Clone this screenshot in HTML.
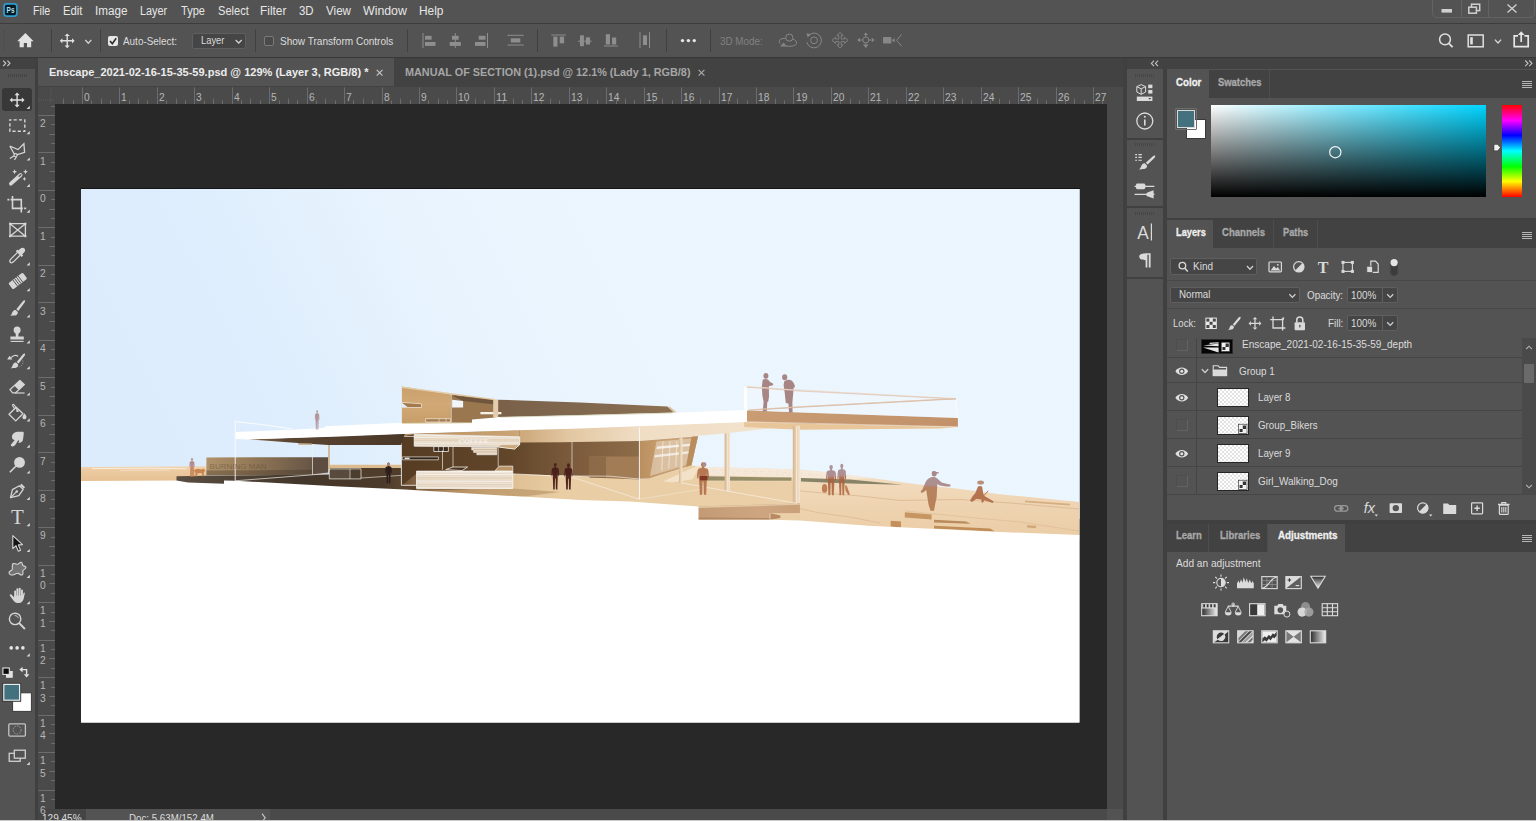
<!DOCTYPE html>
<html lang="en">
<head>
<meta charset="utf-8">
<title>Enscape_2021-02-16-15-35-59.psd @ 129% (Layer 3, RGB/8) *</title>
<style>
html,body{margin:0;padding:0;background:#535353;overflow:hidden;}
body{width:1536px;height:821px;font-family:"Liberation Sans",sans-serif;}
#app{position:relative;width:1536px;height:821px;overflow:hidden;background:#535353;}
#app div,#app span.t,#app svg{position:absolute;}
.t{white-space:nowrap;height:20px;line-height:20px;transform-origin:0 50%;}
#menubar{left:0;top:0;width:1536px;height:23px;background:#535353;}
#menusep{left:0;top:23px;width:1536px;height:1px;background:#3d3d3d;}
#optbar{left:0;top:24px;width:1536px;height:33px;background:#535353;}
#optsep{left:0;top:57px;width:1536px;height:1px;background:#383838;}
#winctl{left:1432px;top:-2px;width:103px;height:20px;border:1px solid #636363;border-radius:0 0 5px 5px;box-sizing:border-box;}
#winctl i{position:absolute;top:0;width:1px;height:18px;background:#636363;}
.vsep{width:1px;top:29px;height:23px;background:#404040;}
#toolbar{left:0;top:58px;width:35px;height:763px;background:#535353;}
#toolhead{left:0;top:58px;width:35px;height:11px;background:#424242;}
#toolsel{left:2px;top:88px;width:30px;height:23px;background:#383838;border-radius:3px;}
#gapL{left:35px;top:58px;width:3px;height:763px;background:#404040;}
#tabbar{left:38px;top:58px;width:1085px;height:29px;background:#424242;}
#tab1{left:38px;top:58px;width:356px;height:28px;background:#535353;}
#hruler{left:38px;top:87px;width:1085px;height:17px;background:#4a4a4a;}
#vruler{left:38px;top:104px;width:17px;height:705px;background:#4a4a4a;}
#rcorner{left:38px;top:87px;width:17px;height:17px;background:#4a4a4a;}
#vscroll{left:1107px;top:104px;width:16px;height:705px;background:#4a4a4a;}
#scorner{left:1107px;top:809px;width:16px;height:12px;background:#535353;}
#canvas{left:55px;top:104px;width:1052px;height:705px;background:#282828;overflow:hidden;}
#status{left:38px;top:809px;width:1069px;height:12px;background:#4a4a4a;}
#statzoom{left:38px;top:809px;width:48px;height:12px;background:#454545;}
#statdoc{left:86px;top:809px;width:184px;height:12px;background:#535353;}
#gapM{left:1123px;top:58px;width:4px;height:763px;background:#404040;}
#rhead{left:1127px;top:58px;width:409px;height:11px;background:#424242;}
#strip{left:1127px;top:69px;width:36px;height:752px;background:#535353;}
.ssep{left:1127px;width:36px;height:2px;background:#404040;}
#gapR{left:1163px;top:69px;width:4px;height:752px;background:#404040;}
.ptabs{left:1167px;width:369px;height:28px;background:#424242;}
.ptab{height:28px;background:#424242;border-right:1px solid #4d4d4d;box-sizing:border-box;}
.ptab.on{background:#535353;border-right:none;}
.pgap{left:1167px;width:369px;height:2px;background:#404040;}
.field{background:#454545;border:1px solid #5f5f5f;border-radius:2px;box-sizing:border-box;}
.hline{left:1167px;width:369px;height:1px;background:#484848;}
.row{left:1167px;width:355px;border-bottom:1px solid #454545;box-sizing:border-box;}
#eyecol{left:1196px;top:338px;width:1px;height:157px;background:#454545;}
#lscroll{left:1522px;top:338px;width:14px;height:157px;background:#4a4a4a;}
#lthumb{left:1524px;top:364px;width:10px;height:19px;background:#6a6a6a;border-radius:1px;}
.chk{background:conic-gradient(#e2e2e2 25%,#fff 0 50%,#e2e2e2 0 75%,#fff 0) 0 0/4px 4px;border:1px solid #262626;box-sizing:border-box;}
.eyebox{width:12px;height:12px;border:1px solid #4e4e4e;border-right-color:#626262;border-bottom-color:#626262;box-sizing:border-box;}
#edge{left:0;top:820px;width:1536px;height:1px;background:#c9c9c9;}
#labels{left:0;top:0;width:1536px;height:821px;overflow:hidden;}

</style>
</head>
<body>
<div id="app">
<div id="menubar"></div><div id="menusep"></div>
<div id="optbar"></div><div id="optsep"></div>
<div id="winctl"><i style="left:28px"></i><i style="left:55px"></i></div>
<div class="vsep" style="left:51px"></div>
<div class="vsep" style="left:100px"></div>
<div class="vsep" style="left:255px"></div>
<div class="vsep" style="left:407px"></div>
<div class="vsep" style="left:537px"></div>
<div class="vsep" style="left:666px"></div>
<div class="vsep" style="left:710px"></div>
<div class="field" style="left:192px;top:33px;width:54px;height:16px;background:#454545;border-color:#5f5f5f"></div>
<div style="left:108px;top:36px;width:10px;height:10px;background:#e6e6e6;border-radius:2px"></div>
<div style="left:264px;top:36px;width:10px;height:10px;border:1px solid #7a7a7a;border-radius:2px;box-sizing:border-box;background:#4a4a4a"></div>
<div id="toolbar"></div><div id="toolhead"></div><div id="toolsel"></div><div id="gapL"></div>
<div id="tabbar"></div><div id="tab1"></div>
<div id="hruler"></div><div id="vruler"></div><div id="rcorner"></div><div id="vscroll"></div>
<div id="status"></div><div id="scorner"></div><div id="statzoom"></div><div id="statdoc"></div>
<div id="gapM"></div><div id="rhead"></div><div id="strip"></div><div id="gapR"></div>
<div class="ssep" style="top:138px"></div><div class="ssep" style="top:206px"></div><div class="ssep" style="top:277px"></div>
<div class="ptabs" style="top:70px"></div>
<div class="ptab on" style="left:1167px;top:70px;width:42px"></div>
<div class="ptab" style="left:1209px;top:70px;width:61px"></div>
<div id="colorfield" style="left:1211px;top:105px;width:275px;height:92px;background:linear-gradient(to bottom,rgba(0,0,0,0),#000),linear-gradient(to right,#fff,#00d4ff)"></div>
<div id="huestrip" style="left:1502px;top:105px;width:20px;height:92px;background:linear-gradient(to bottom,#f00 0%,#f0f 17%,#00f 33%,#0ff 50%,#0f0 67%,#ff0 83%,#f00 100%)"></div>
<div style="left:1186px;top:119px;width:20px;height:20px;background:#fff;border:1px solid #3a3a3a;box-sizing:border-box"></div>
<div style="left:1175px;top:108px;width:22px;height:22px;border:1px solid #6e6e6e;box-sizing:border-box;border-radius:1px"></div>
<div style="left:1177px;top:110px;width:18px;height:18px;background:#44717e;border:1px solid #d8d8d8;box-sizing:border-box"></div>
<div class="pgap" style="top:218px"></div>
<div class="ptabs" style="top:220px"></div>
<div class="ptab on" style="left:1167px;top:220px;width:46px"></div>
<div class="ptab" style="left:1213px;top:220px;width:61px"></div>
<div class="ptab" style="left:1274px;top:220px;width:44px"></div>
<div class="field" style="left:1170px;top:258px;width:87px;height:17px"></div>
<div class="hline" style="top:280px"></div>
<div class="field" style="left:1170px;top:287px;width:130px;height:16px"></div>
<div class="field" style="left:1347px;top:287px;width:36px;height:16px;border-radius:2px 0 0 2px"></div>
<div class="field" style="left:1382px;top:287px;width:16px;height:16px;border-radius:0 2px 2px 0"></div>
<div class="hline" style="top:308px"></div>
<div class="field" style="left:1347px;top:315px;width:36px;height:16px;border-radius:2px 0 0 2px"></div>
<div class="field" style="left:1382px;top:315px;width:16px;height:16px;border-radius:0 2px 2px 0"></div>
<div class="row" style="top:338px;height:20px"></div>
<div class="row" style="top:358px;height:25px"></div>
<div class="row" style="top:383px;height:28px"></div>
<div class="row" style="top:411px;height:28px"></div>
<div class="row" style="top:439px;height:28px"></div>
<div class="row" style="top:467px;height:28px"></div>
<div id="eyecol"></div><div id="lscroll"></div><div id="lthumb"></div>
<div class="eyebox" style="left:1176px;top:339px"></div>
<div class="eyebox" style="left:1176px;top:419px"></div>
<div class="eyebox" style="left:1176px;top:475px"></div>
<div style="left:1201px;top:339px;width:32px;height:15px;background:#050505;border:1px solid #2a2a2a;box-sizing:border-box"></div>
<div class="chk" style="left:1217px;top:388px;width:32px;height:19px"></div>
<div class="chk" style="left:1217px;top:416px;width:32px;height:19px"></div>
<div class="chk" style="left:1217px;top:444px;width:32px;height:19px"></div>
<div class="chk" style="left:1217px;top:472px;width:32px;height:19px"></div>
<div class="pgap" style="top:520px;height:4px"></div>
<div class="ptabs" style="top:524px"></div>
<div class="ptab" style="left:1167px;top:524px;width:42px"></div>
<div class="ptab" style="left:1209px;top:524px;width:59px"></div>
<div class="ptab on" style="left:1268px;top:524px;width:77px"></div>
<div id="canvas">
<svg id="art" width="1052" height="705" viewBox="55 104 1052 705" style="left:0;top:0">
<defs>
<linearGradient id="sky" x1="81" y1="340" x2="1079" y2="-160" gradientUnits="userSpaceOnUse"><stop offset="0" stop-color="#dcecfd"/><stop offset="0.12" stop-color="#ddedfd"/><stop offset="0.21" stop-color="#e2f0fd"/><stop offset="0.3" stop-color="#e8f3fe"/><stop offset="0.4" stop-color="#eaf5fe"/><stop offset="1" stop-color="#ecf6fe"/></linearGradient>
<linearGradient id="skyv" x1="0" x2="0" y1="189" y2="500" gradientUnits="userSpaceOnUse"><stop offset="0" stop-color="#ffffff" stop-opacity="0.0"/><stop offset="1" stop-color="#ffffff" stop-opacity="0"/></linearGradient>
<linearGradient id="sandL" x1="0" x2="0" y1="466" y2="481" gradientUnits="userSpaceOnUse"><stop offset="0" stop-color="#f1d6b2"/><stop offset="0.35" stop-color="#ecc99f"/><stop offset="1" stop-color="#e6c195"/></linearGradient>
<linearGradient id="wallBM" x1="206" x2="328" y1="0" y2="0" gradientUnits="userSpaceOnUse"><stop offset="0" stop-color="#b0936a"/><stop offset="0.35" stop-color="#947a58"/><stop offset="0.8" stop-color="#6d5a48"/><stop offset="1" stop-color="#5c4c3f"/></linearGradient>
<linearGradient id="under" x1="248" x2="401" y1="0" y2="0" gradientUnits="userSpaceOnUse"><stop offset="0" stop-color="#8a6c48"/><stop offset="0.25" stop-color="#5a4532"/><stop offset="1" stop-color="#4a3828"/></linearGradient>
<linearGradient id="plat" x1="176" x2="420" y1="0" y2="0" gradientUnits="userSpaceOnUse"><stop offset="0" stop-color="#5a4d42"/><stop offset="0.5" stop-color="#43362b"/><stop offset="0.85" stop-color="#4c3a29"/><stop offset="1" stop-color="#6b5238"/></linearGradient>
<linearGradient id="intwall" x1="401" x2="640" y1="0" y2="0" gradientUnits="userSpaceOnUse"><stop offset="0" stop-color="#553c22"/><stop offset="0.45" stop-color="#62462a"/><stop offset="0.7" stop-color="#7a5a3b"/><stop offset="1" stop-color="#8d6c48"/></linearGradient>
<linearGradient id="floor" x1="401" x2="800" y1="0" y2="0" gradientUnits="userSpaceOnUse"><stop offset="0" stop-color="#6a5036"/><stop offset="0.09" stop-color="#a58258"/><stop offset="0.22" stop-color="#d9b98b"/><stop offset="0.4" stop-color="#e9cda4"/><stop offset="1" stop-color="#ebcfa8"/></linearGradient>
<linearGradient id="terr" x1="0" x2="0" y1="466" y2="535" gradientUnits="userSpaceOnUse"><stop offset="0" stop-color="#f3dfc4"/><stop offset="0.5" stop-color="#efd5b3"/><stop offset="1" stop-color="#ebcda6"/></linearGradient>
<linearGradient id="woodF" x1="0" x2="0" y1="386" y2="423" gradientUnits="userSpaceOnUse"><stop offset="0" stop-color="#c9a06c"/><stop offset="0.5" stop-color="#d2a976"/><stop offset="1" stop-color="#c79d68"/></linearGradient>
<linearGradient id="roofD" x1="497" x2="674" y1="0" y2="0" gradientUnits="userSpaceOnUse"><stop offset="0" stop-color="#7a6049"/><stop offset="0.5" stop-color="#80684f"/><stop offset="1" stop-color="#8d7051"/></linearGradient>
<linearGradient id="soffit" x1="401" x2="800" y1="0" y2="0" gradientUnits="userSpaceOnUse"><stop offset="0" stop-color="#b88f5e"/><stop offset="0.28" stop-color="#c9a374"/><stop offset="0.42" stop-color="#e2c7a2"/><stop offset="0.6" stop-color="#f0ddc4"/><stop offset="1" stop-color="#f3e4d0"/></linearGradient>
<linearGradient id="colg" x1="0" x2="1" y1="0" y2="0"><stop offset="0" stop-color="#d6b48e"/><stop offset="0.45" stop-color="#e6cdae"/><stop offset="1" stop-color="#f4e6d2"/></linearGradient>
<linearGradient id="sign" x1="0" x2="0" y1="0" y2="1"><stop offset="0" stop-color="#efe4d6"/><stop offset="0.2" stop-color="#f6f0e8"/><stop offset="0.4" stop-color="#e6d5bf"/><stop offset="0.6" stop-color="#f5efe7"/><stop offset="0.8" stop-color="#e9dccb"/><stop offset="1" stop-color="#f3ece3"/></linearGradient>
<linearGradient id="angwall" x1="639" x2="698" y1="0" y2="0" gradientUnits="userSpaceOnUse"><stop offset="0" stop-color="#b98f60"/><stop offset="0.35" stop-color="#c79d6d"/><stop offset="1" stop-color="#c9a274"/></linearGradient>
<linearGradient id="found" x1="698" x2="800" y1="0" y2="0" gradientUnits="userSpaceOnUse"><stop offset="0" stop-color="#c39a74"/><stop offset="0.6" stop-color="#cda681"/><stop offset="1" stop-color="#c8a07a"/></linearGradient>
<linearGradient id="deck" x1="746" x2="958" y1="0" y2="0" gradientUnits="userSpaceOnUse"><stop offset="0" stop-color="#c99c74"/><stop offset="0.5" stop-color="#c5976e"/><stop offset="1" stop-color="#c29169"/></linearGradient>
<linearGradient id="pgA" x1="0" x2="0" y1="0" y2="100" gradientUnits="userSpaceOnUse"><stop offset="0" stop-color="#a68890"/><stop offset="0.36" stop-color="#a68488"/><stop offset="0.46" stop-color="#a8603e"/><stop offset="1" stop-color="#b06c44"/></linearGradient>
<linearGradient id="pgB" x1="0" x2="0" y1="476" y2="511" gradientUnits="userSpaceOnUse"><stop offset="0" stop-color="#a98888"/><stop offset="0.24" stop-color="#a98686"/><stop offset="0.34" stop-color="#b07a58"/><stop offset="1" stop-color="#b47a50"/></linearGradient>
<clipPath id="imgclip"><rect x="81" y="189" width="998.5" height="533.5"/></clipPath>
</defs>
<rect x="80.5" y="188" width="999.5" height="1.2" fill="#151515"/>
<g clip-path="url(#imgclip)">
<rect x="81" y="189" width="999" height="534" fill="#ffffff"/>
<rect x="81" y="189" width="999" height="330" fill="url(#sky)"/>
<rect x="81" y="189" width="999" height="330" fill="url(#skyv)"/>
<path d="M81 466.9 L206.4 466.2 L206.4 481 L81 481 Z" fill="url(#sandL)"/>
<path d="M92 468.6 L150 468.2 L186 468.8" fill="none" stroke="#fbf3e8" stroke-width="1" stroke-opacity="0.8"/>
<path d="M120 470.4 L170 470.2" fill="none" stroke="#f8ecdc" stroke-width="0.8" stroke-opacity="0.7"/>
<path d="M686 466.2 L708 466.9 L800 469.6 L830 472.8 L873 478.2 L921 484.7 L956 488.4 L1000 494.3 L1079.5 502 L1079.5 540 L686 540 Z" fill="url(#terr)"/>
<path d="M704 466.8 L760 468.4 L800 469.6 L830 472.8 L873 478.2 L830 479.4 L800 477.6 L760 476.2 L708 475.2 Z" fill="#f5e9da" fill-opacity="0.95"/>
<path d="M712 470 L790 472.4 L828 475.6" fill="none" stroke="#dcc2a2" stroke-width="0.7" stroke-opacity="0.35" stroke-dasharray="3 2 1 2"/>
<path d="M716 472.8 L796 475 L850 478.6" fill="none" stroke="#d8bb98" stroke-width="0.6" stroke-opacity="0.3" stroke-dasharray="2 3 4 2"/>
<path d="M691.8 476 L791.5 477.6 L791.5 480.8 L691.8 480.4 Z" fill="#8a845e" fill-opacity="0.9"/>
<path d="M801 477.9 L850 479.4 L902.8 484.7 L850 483.4 L801 481.6 Z" fill="#767258" fill-opacity="0.85"/>
<path d="M800 491 L860 496 L900 500.5 L960 499.5 L1010 503 L1079 509" fill="none" stroke="#caa57a" stroke-width="0.6" stroke-opacity="0.8"/>
<path d="M700 497 L760 500 L820 513 L850 517 L880 523" fill="none" stroke="#caa57a" stroke-width="0.6" stroke-opacity="0.7"/>
<path d="M905 511 L960 516.5 L1020 522 L1079 531" fill="none" stroke="#d2b088" stroke-width="0.6" stroke-opacity="0.7"/>
<path d="M904.8 512.3 L931.6 514.5 L931.6 519.6 L904.8 517.6 Z" fill="#c79562"/>
<path d="M890.7 520.8 L901 521.6 L901 527.4 L890.7 526.6 Z" fill="#c38f5a"/>
<path d="M934 519.8 L966 521.6 L970.6 523.8 L934 522.4 Z" fill="#b98a5c"/>
<path d="M934 525.7 L990 528.6 L995 531.6 L934 528.4 Z" fill="#c08d58"/>
<path d="M1025 500.6 L1070 503.8 L1070 505.4 L1025 502.2 Z" fill="#d5ae82"/>
<path d="M1027 525.2 L1036 525.8 L1036 528.2 L1027 527.6 Z" fill="#d0a878"/>
<path d="M176.5 476.3 L206.4 475.7 L328 474.4 L401.2 471.6 L420 471.6 L420 492 L176.5 492 Z" fill="url(#plat)"/>
<path d="M206.4 457.4 L312.3 457.2 L312.3 474.8 L206.4 475.6 Z" fill="url(#wallBM)"/>
<path d="M312.3 457.2 L328.2 457.2 L328.2 473.2 L312.3 474.8 Z" fill="#5d4d40"/>
<path d="M206.4 470.5 L312.3 469.8 L312.3 474.8 L206.4 475.6 Z" fill="#3c3026" fill-opacity="0.35"/>
<path d="M329.5 464.8 L401.2 464.8 L401.2 467.9 L329.5 467.9 Z" fill="#dcbc8e"/>
<path d="M329.5 467.9 L401.2 467.9 L401.2 476.5 L329.5 479 Z" fill="#4f3c2a"/>
<path d="M329.3 468.9 L361 468.9 L361 478.9 L329.3 478.9 Z" fill="#4b3d30"/>
<path d="M329.3 468.9 L350 468.9 L350 478.9 L329.3 478.9 Z" fill="#584a3c"/>
<path d="M328.2 444.9 L329.8 444.9 L329.8 471 L328.2 471 Z" fill="#cfae84"/>
<path d="M401.2 433.9 L520 430 L640 427.4 L640 480 L401.2 487 Z" fill="url(#intwall)"/>
<path d="M416 474 L513 474 L580 476 L639 479.2 L648.8 478.4 L691.5 465.4 L700 466.5 L700 481 L800 481.6 L800 522 L401 522 L401.2 486 Z" fill="url(#floor)"/>
<path d="M401.2 485.3 L416.5 485.3 L416.5 488.4 L470 489 L401.2 492 Z" fill="#5a442e"/>
<path d="M416.5 488.4 L512.8 488.4 L560 492 L520 497 L416 490.5 Z" fill="#b08a5c" fill-opacity="0.55"/>
<path d="M589.6 456.5 L639.4 456.5 L639.4 479.5 L589.6 477.4 Z" fill="#a27c55"/>
<path d="M589.6 456.5 L606 456.5 L606 478 L589.6 477.4 Z" fill="#8e6b48"/>
<path d="M519.7 430 L744.2 422 L800 423.2 L800 426 L792.4 425.8 L724.4 433.4 L698 435.8 L639.4 441 L560 442.2 L519.7 442.6 Z" fill="url(#soffit)"/>
<path d="M401.2 433.9 L519.7 430 L519.7 436.8 L414.2 434.2 L401.2 436.4 Z" fill="url(#soffit)"/>
<path d="M639.4 441 L698 436.2 L691.5 465.2 L648.8 478.4 L639.4 478.8 Z" fill="url(#angwall)"/>
<path d="M656.5 441.5 L696.5 438 L692 463.4 L650 476 Z" fill="#e9dccb" fill-opacity="0.55"/>
<path d="M657 446.5 L696 443.2 L695.6 445.4 L656.4 449 Z" fill="#f7f3ee" fill-opacity="0.9"/>
<path d="M655 455 L694.2 450.6 L693.8 453 L654.2 457.6 Z" fill="#f7f3ee" fill-opacity="0.8"/>
<path d="M691.5 436.8 L698 436.2 L691.5 465.2 L686 466.8 Z" fill="#b98d5c"/>
<path d="M663 441 L661.8 470.36" fill="none" stroke="#fbf7f2" stroke-width="0.7" stroke-opacity="0.8"/>
<path d="M670 441 L668.8 468.4" fill="none" stroke="#fbf7f2" stroke-width="0.7" stroke-opacity="0.8"/>
<path d="M677 441 L675.8 466.44" fill="none" stroke="#fbf7f2" stroke-width="0.7" stroke-opacity="0.8"/>
<path d="M663.2 481.3 L697.7 465.6 L700 466.4 L692.5 479.3 L672 482.4 Z" fill="#f4e4cb" fill-opacity="0.9"/>
<path d="M414.2 434.2 L519.7 436.8 L519.7 444.6 L514.6 449 L497 446.8 L414.2 446.2 Z" fill="url(#sign)" stroke="#ffffff" stroke-width="0.7"/>
<path d="M497 446.8 L514.6 449 L519.7 444.6 L502 444.4 Z" fill="#c9a77c" stroke="#ffffff" stroke-width="0.5"/>
<path d="M415 436.4 L519 438" fill="none" stroke="#d6bf9f" stroke-width="0.45" stroke-opacity="0.8"/>
<path d="M415 438.4 L519 440" fill="none" stroke="#d6bf9f" stroke-width="0.45" stroke-opacity="0.8"/>
<path d="M415 440.4 L519 442" fill="none" stroke="#d6bf9f" stroke-width="0.45" stroke-opacity="0.8"/>
<path d="M415 442.4 L519 444" fill="none" stroke="#d6bf9f" stroke-width="0.45" stroke-opacity="0.8"/>
<path d="M415 444.4 L519 446" fill="none" stroke="#d6bf9f" stroke-width="0.45" stroke-opacity="0.8"/>
<path d="M471.7 447.4 L496.8 447.4 L496.8 454.8 L476.8 454.8 L476.8 452.4 L473.6 452.4 L473.6 450 L471.7 450 Z" fill="#e9dccb" stroke="#ffffff" stroke-width="0.5"/>
<path d="M473 449.6 L496.8 449.6" fill="none" stroke="#b99a74" stroke-width="0.5"/><path d="M475 452 L496.8 452" fill="none" stroke="#b99a74" stroke-width="0.5"/>
<path d="M433.8 446.6 L448.4 446.6 L448.4 451.5 L433.8 451.5 Z" fill="#3d2c1c" stroke="#ffffff" stroke-width="0.7"/>
<path d="M438.6 446.6 L438.6 451.5" fill="none" stroke="#fff" stroke-width="0.6"/><path d="M443.4 446.6 L443.4 451.5" fill="none" stroke="#fff" stroke-width="0.6"/>
<path d="M402.3 456.9 L438.4 456.9 L438.4 459.8 L402.3 459.8 Z" fill="#35261a" stroke="#ffffff" stroke-width="0.6"/>
<path d="M404.6 457.6 L409.6 457.6 L409.6 459.2 L404.6 459.2 Z" fill="#e8e0d6"/>
<path d="M416.5 471.1 L512.8 471.1 L512.8 488.4 L416.5 488.4 Z" fill="url(#sign)" stroke="#ffffff" stroke-width="0.7"/>
<path d="M417 473.2 L512.4 473.7" fill="none" stroke="#d4bd9d" stroke-width="0.45" stroke-opacity="0.85"/>
<path d="M417 475.4 L512.4 475.9" fill="none" stroke="#d4bd9d" stroke-width="0.45" stroke-opacity="0.85"/>
<path d="M417 477.6 L512.4 478.1" fill="none" stroke="#d4bd9d" stroke-width="0.45" stroke-opacity="0.85"/>
<path d="M417 479.8 L512.4 480.3" fill="none" stroke="#d4bd9d" stroke-width="0.45" stroke-opacity="0.85"/>
<path d="M417 482 L512.4 482.5" fill="none" stroke="#d4bd9d" stroke-width="0.45" stroke-opacity="0.85"/>
<path d="M417 484.2 L512.4 484.7" fill="none" stroke="#d4bd9d" stroke-width="0.45" stroke-opacity="0.85"/>
<path d="M417 486.4 L512.4 486.9" fill="none" stroke="#d4bd9d" stroke-width="0.45" stroke-opacity="0.85"/>
<path d="M495 470.8 L499.1 466.1 L512.8 466.1 L512.8 471 Z" fill="#b99569" stroke="#ffffff" stroke-width="0.6"/>
<path d="M445.7 469.6 L453 467 L467.6 467 L462.1 470.6 Z" fill="#4a3624" stroke="#f4efe8" stroke-width="0.8"/>
<path d="M401.4 436.4 L401.4 485.3 L416.5 485.3" fill="none" stroke="#fff" stroke-width="0.8"/>
<path d="M401.4 436.4 L414.2 436.4" fill="none" stroke="#fff" stroke-width="0.7"/>
<path d="M442.5 450.5 L442.5 469.7" fill="none" stroke="#fff" stroke-width="0.6"/><path d="M453 446.4 L453 467" fill="none" stroke="#fff" stroke-width="0.6"/><path d="M498.2 447.8 L498.2 466.3" fill="none" stroke="#fff" stroke-width="0.6"/>
<path d="M512.8 473.8 L551 475.8 L610 476.2 L639.4 479" fill="none" stroke="#fff" stroke-width="0.7" stroke-opacity="0.85"/>
<path d="M248.4 439.4 L405 433.6 L401.2 444.9 L328.1 444.9 L297.7 443.1 Z" fill="url(#under)"/>
<path d="M298.3 443.2 L311.9 443.2 L311.9 445 L298.3 445 Z" fill="#a58a68"/>
<path d="M497.3 399.7 L580 402.4 L667.4 406.5 L674 412.6 L580 415 L497.3 417 Z" fill="url(#roofD)"/>
<path d="M667.4 406.5 L670 406.7 L677 412.5 L674 412.6 Z" fill="#dcc3a0"/>
<path d="M235.5 432 L295.3 429.6 L324.6 427.9 L324.6 426.2 L402 422.8 L451 422.6 L472 422.4 L472 419.6 L497 417.2 L580 415.2 L674 412.8 L744.2 410 L746.8 410.4 L746.8 422 L580 428.4 L414.8 433.5 L340 436.4 L248.4 439.4 L235.5 439 Z" fill="#ffffff"/>
<path d="M402 423.4 L451 423 L472 422.6" fill="none" stroke="#cdbb7c" stroke-width="0.8" stroke-opacity="0.8"/>
<path d="M500 417.2 L580 415.4 L672 413" fill="none" stroke="#b8b07a" stroke-width="0.7" stroke-opacity="0.6"/>
<path d="M401.9 386.4 L451.2 394.6 L451.2 422.6 L401.9 423 Z" fill="url(#woodF)"/>
<path d="M451.2 394.6 L495 399.4 L495 417.4 L472 419.6 L472 422.4 L451.2 422.6 Z" fill="#9b7750"/>
<path d="M452 395.4 L495 400.2 L495 404.6 L463.1 401 Z" fill="#6f563c"/>
<path d="M401.9 386.4 L495 398.9 L495 400.2 L401.9 387.9 Z" fill="#e3cba6"/>
<path d="M452.1 399.7 L463.1 401 L463.1 407.4 L452.1 407.4 Z" fill="#f1f6fb"/>
<path d="M480.4 412 L501.4 412 L501.4 414.3 L480.4 414.3 Z" fill="#f6f1ea"/>
<path d="M401.5 402.4 L421.5 403.8 L421.5 407.5 L401.5 407.5 Z" fill="#a27a4c" stroke="#f3ece2" stroke-width="0.7"/>
<path d="M401.5 402.6 L407.6 406.9 L401.5 407.2 Z" fill="#e3effb"/>
<path d="M425.6 418.7 L450.7 418.7 L450.7 422 L425.6 422 Z" fill="#a57d50" stroke="#f3ece2" stroke-width="0.7"/>
<path d="M439 418.7 L439 422" fill="none" stroke="#f3ece2" stroke-width="0.6"/><path d="M446 418.7 L446 422" fill="none" stroke="#f3ece2" stroke-width="0.6"/>
<path d="M493.2 399.2 L498.2 399.8 L498.2 417.3 L493.2 417.6 Z" fill="#e4cdae"/>
<path d="M451.4 394.8 L451.4 422.4" fill="none" stroke="#f0e6d8" stroke-width="0.6" stroke-opacity="0.8"/>
<path d="M746.8 410.4 L800 412.4 L957.9 418 L957.9 427 L800 423.8 L746.8 422 Z" fill="url(#deck)"/>
<path d="M744.2 422 L800 423.8 L957.9 427 L940 428.4 L800 429.8 L744.2 427 Z" fill="#e8c69a"/>
<path d="M746.8 421.8 L957.9 426.8" fill="none" stroke="#f7efe4" stroke-width="0.7" stroke-opacity="0.8"/>
<path d="M745.9 386.3 L956 398.5 L957.5 418 L746.8 410.4 Z" fill="#f5faff" fill-opacity="0.35"/>
<path d="M745.9 386.3 L800 390.5 L956 398.5 L957.5 418" fill="none" stroke="#fdfdfd" stroke-width="0.8"/>
<path d="M744.2 386.6 L746.9 386.6 L746.9 422 L744.2 422 Z" fill="#ffffff"/>
<path d="M748.5 410 L800 406.8 L956 398.5" fill="none" stroke="#e6cdb0" stroke-width="0.8"/>
<path d="M745.9 386.8 L956 399" fill="none" stroke="#d9bfa4" stroke-width="0.5" stroke-opacity="0.7"/>
<path d="M679 437.8 L682.4 437.4 L682.4 483.2 L679 482.8 Z" fill="url(#colg)"/>
<path d="M724.6 433.4 L730 432.8 L730 491.7 L724.6 491.2 Z" fill="url(#colg)"/>
<path d="M792.8 425.8 L800 425.8 L800 503 L792.8 502.6 Z" fill="url(#colg)"/>
<path d="M727.3 433.2 L727.3 491.4" fill="none" stroke="#f8f0e4" stroke-width="0.7"/><path d="M796.4 425.8 L796.4 502.8" fill="none" stroke="#f8f0e4" stroke-width="0.8"/>
<path d="M698.4 506.6 L799.9 503.4 L799.9 513 L770 513.2 L770 519.7 L698.4 519.7 Z" fill="url(#found)"/>
<path d="M698.4 506.6 L799.9 503.4 L799.9 504.8 L698.4 508 Z" fill="#e3c8a6"/>
<path d="M698.4 517.6 L770 518 L770 519.7 L698.4 519.7 Z" fill="#a87f58" fill-opacity="0.7"/>
<path d="M770 513.2 L780.4 515.4 L780.4 518 L770 519.7 Z" fill="#b98a62"/>
<path d="M770 513.2 L770 519.7" fill="none" stroke="#f3e6d4" stroke-width="0.7"/>
<path d="M81 481 L176.5 480.6 L188 482.6 L224 483.8 L224 480.6 L235.5 480.8 L340 486.6 L405 489.6 L530 497.1 L580 500 L630 501.6 L698.4 506.6 L698.4 519.7 L770 519.7 L800 520.6 L868.2 525.7 L995 531.8 L1079.5 535 L1079.5 723 L81 723 Z" fill="#ffffff"/>
<path d="M235.2 480.8 L235.2 421.5 L262 424.6 L291.6 428.8" fill="none" stroke="#fdfdfd" stroke-width="0.9"/>
<path d="M235.2 480.8 L312.5 474.8 L328.1 473" fill="none" stroke="#f4f0ea" stroke-width="0.7"/>
<path d="M312.5 444.5 L312.5 474.8" fill="none" stroke="#f4f0ea" stroke-width="0.6"/><path d="M298 444.6 L312.5 444.8" fill="none" stroke="#f4f0ea" stroke-width="0.5"/>
<path d="M329.3 468.9 L361 468.9 L361 478.9 L329.3 478.9 L329.3 468.9" fill="none" stroke="#f4f0ea" stroke-width="0.7"/><path d="M350 468.9 L350 478.9" fill="none" stroke="#f4f0ea" stroke-width="0.6"/>
<path d="M361 478 L401.2 475.4" fill="none" stroke="#f4f0ea" stroke-width="0.6"/>
<path d="M639.4 427.5 L639.4 499.2" fill="none" stroke="#fdfdfd" stroke-width="0.9"/>
<path d="M572 442 L572 477.2 L639.4 499.2" fill="none" stroke="#f6f1ea" stroke-width="0.7" stroke-opacity="0.9"/>
<path d="M639.4 499.2 L700 489.5" fill="none" stroke="#f6f1ea" stroke-width="0.6" stroke-opacity="0.7"/>
<path d="M682 483 L729 491.4 L797 503.4" fill="none" stroke="#f8f4ee" stroke-width="0.7" stroke-opacity="0.9"/>
<text x="209.6" y="468.6" font-family="Liberation Sans, sans-serif" font-size="7.4" fill="#5f4d3a" fill-opacity="0.55" textLength="57" lengthAdjust="spacingAndGlyphs">BURNING MAN</text>
<text x="458.6" y="443.6" font-family="Liberation Sans, sans-serif" font-size="8" font-weight="700" fill="#ffffff" stroke="#e1d2bd" stroke-width="0.3" textLength="30.5" lengthAdjust="spacingAndGlyphs">COFFEE</text>
<g transform="translate(317.1 410.2) scale(0.1278 0.1940)" fill="#b08f92" fill-opacity="0.95"><ellipse cx="0" cy="7" rx="6.3" ry="7.3"/><path d="M-3 13.5 L3 13.5 L4 17 C10 17.5 15 19 16 24 L18 42 L17 50 L14 50 L12.5 40 L12 30 L11 46 L11.5 56 L10.5 75 L9.5 97 L10.5 100 L3 100 L2.5 97 L1.5 62 L0 56 L-1.5 62 L-2.5 97 L-3 100 L-10.5 100 L-9.5 97 L-10.5 75 L-11.5 56 L-11 46 L-12 30 L-12.5 40 L-14 50 L-17 50 L-18 42 L-16 24 C-15 19 -10 17.5 -4 17 Z"/></g>
<g transform="translate(192 458) scale(0.1444 0.1840)" fill="#b18686" fill-opacity="0.95"><ellipse cx="0" cy="7" rx="6.3" ry="7.3"/><path d="M-3 13.5 L3 13.5 L4 17 C10 17.5 15 19 16 24 L18 42 L17 50 L14 50 L12.5 40 L12 30 L11 46 L11.5 56 L10.5 75 L9.5 97 L10.5 100 L3 100 L2.5 97 L1.5 62 L0 56 L-1.5 62 L-2.5 97 L-3 100 L-10.5 100 L-9.5 97 L-10.5 75 L-11.5 56 L-11 46 L-12 30 L-12.5 40 L-14 50 L-17 50 L-18 42 L-16 24 C-15 19 -10 17.5 -4 17 Z"/></g>
<path d="M190.4 467.4 L194 467.4 L194.4 476.4 L190 476.4 Z" fill="#c98a58" fill-opacity="0.8"/>
<path d="M193.6 470.2 L197.6 468.8 L201.6 469.6 L203.4 468.4 L205.4 470.6 L204 472 L203.6 476.2 L202.4 476.2 L201.8 473 L197.6 473.2 L196.8 476.4 L195.6 476.4 L195.4 472.6 Z" fill="#c9854f"/>
<g transform="translate(388.5 462.6) scale(0.1833 0.2100)" fill="#2b1d19" fill-opacity="1"><ellipse cx="0" cy="7" rx="6.3" ry="7.3"/><path d="M-3 13.5 L3 13.5 L4 17 C10 17.5 15 19 16 24 L18 42 L17 50 L14 50 L12.5 40 L12 30 L11 46 L11.5 56 L10.5 75 L9.5 97 L10.5 100 L3 100 L2.5 97 L1.5 62 L0 56 L-1.5 62 L-2.5 97 L-3 100 L-10.5 100 L-9.5 97 L-10.5 75 L-11.5 56 L-11 46 L-12 30 L-12.5 40 L-14 50 L-17 50 L-18 42 L-16 24 C-15 19 -10 17.5 -4 17 Z"/></g>
<ellipse cx="388.5" cy="464.2" rx="1.5" ry="1.7" fill="#b27d78"/>
<g transform="translate(555.3 463) scale(0.2167 0.2650)" fill="#4a1e18" fill-opacity="0.95"><ellipse cx="0" cy="7" rx="6.3" ry="7.3"/><path d="M-3 13.5 L3 13.5 L4 17 C10 17.5 15 19 16 24 L18 42 L17 50 L14 50 L12.5 40 L12 30 L11 46 L11.5 56 L10.5 75 L9.5 97 L10.5 100 L3 100 L2.5 97 L1.5 62 L0 56 L-1.5 62 L-2.5 97 L-3 100 L-10.5 100 L-9.5 97 L-10.5 75 L-11.5 56 L-11 46 L-12 30 L-12.5 40 L-14 50 L-17 50 L-18 42 L-16 24 C-15 19 -10 17.5 -4 17 Z"/></g>
<g transform="translate(568.4 463.4) scale(0.2333 0.2610)" fill="#4a1e18" fill-opacity="0.95"><ellipse cx="0" cy="7" rx="6.3" ry="7.3"/><path d="M-3 13.5 L3 13.5 L4 17 C10 17.5 15 19 16 24 L18 42 L17 50 L14 50 L12.5 40 L12 30 L11 46 L11.5 56 L10.5 75 L9.5 97 L10.5 100 L3 100 L2.5 97 L1.5 62 L0 56 L-1.5 62 L-2.5 97 L-3 100 L-10.5 100 L-9.5 97 L-10.5 75 L-11.5 56 L-11 46 L-12 30 L-12.5 40 L-14 50 L-17 50 L-18 42 L-16 24 C-15 19 -10 17.5 -4 17 Z"/></g>
<g transform="translate(703 462.4) scale(0.3333 0.3240)" fill="#b2704a" fill-opacity="0.93"><ellipse cx="0" cy="7" rx="6.3" ry="7.3"/><path d="M-3 13.5 L3 13.5 L4 17 C10 17.5 15 19 16 24 L18 42 L17 50 L14 50 L12.5 40 L12 30 L11 46 L11.5 56 L10.5 75 L9.5 97 L10.5 100 L3 100 L2.5 97 L1.5 62 L0 56 L-1.5 62 L-2.5 97 L-3 100 L-10.5 100 L-9.5 97 L-10.5 75 L-11.5 56 L-11 46 L-12 30 L-12.5 40 L-14 50 L-17 50 L-18 42 L-16 24 C-15 19 -10 17.5 -4 17 Z"/></g>
<ellipse cx="704.4" cy="464.6" rx="2" ry="2.3" fill="#b08c92"/>
<path d="M699.6 476 L707.6 476 L707.4 480.2 L699.8 480.2 Z" fill="#7a2c1c" fill-opacity="0.85"/>
<ellipse cx="765.9" cy="375.8" rx="2.5" ry="2.9" fill="#a88585"/>
<path d="M762.8 379.6 C764.5 378.7 767 378.7 768.2 379.8 L770 382 L773 383.4 L773.2 385.3 L769.6 386.1 L768.9 386.1 L769 396.6 L768.2 401.8 L767.3 402 L766.8 411.4 L762.7 411.4 L763.6 402 L762.3 395 L761.9 386 Z" fill="#a88585"/>
<ellipse cx="784.7" cy="377.3" rx="2.6" ry="3" fill="#a88585"/>
<path d="M784.2 381.5 C786 379.6 790 379.2 791.5 380.6 C793.4 382 794.6 384.6 795 387 L793.6 387.8 L793.4 391 L792.4 402.4 L792.6 412.4 L789 412.4 L788.4 403.6 L785.8 403 L784.6 392 L783.6 385 Z" fill="#a88585"/>
<path d="M746.9 386.6 L800 390.5 L956 398.5" fill="none" stroke="#ecdccf" stroke-width="1.2"/>
<path d="M746.9 387.2 L800 391.1 L956 399" fill="none" stroke="#d2b29e" stroke-width="0.5"/>
<path d="M748.5 410 L800 406.8 L956 398.5" fill="none" stroke="#e4cdbb" stroke-width="1"/>
<path d="M748.5 410.5 L800 407.3 L956 399" fill="none" stroke="#cfa98f" stroke-width="0.5"/>
<g transform="translate(831.1 465) scale(0.2833 0.3030)" fill="url(#pgA)" fill-opacity="0.9"><ellipse cx="0" cy="7" rx="6.3" ry="7.3"/><path d="M-3 13.5 L3 13.5 L4 17 C10 17.5 15 19 16 24 L18 42 L17 50 L14 50 L12.5 40 L12 30 L11 46 L11.5 56 L10.5 75 L9.5 97 L10.5 100 L3 100 L2.5 97 L1.5 62 L0 56 L-1.5 62 L-2.5 97 L-3 100 L-10.5 100 L-9.5 97 L-10.5 75 L-11.5 56 L-11 46 L-12 30 L-12.5 40 L-14 50 L-17 50 L-18 42 L-16 24 C-15 19 -10 17.5 -4 17 Z"/></g>
<g transform="translate(841.8 463.8) scale(0.2444 0.3150)" fill="url(#pgA)" fill-opacity="0.9"><ellipse cx="0" cy="7" rx="6.3" ry="7.3"/><path d="M-3 13.5 L3 13.5 L4 17 C10 17.5 15 19 16 24 L18 42 L17 50 L14 50 L12.5 40 L12 30 L11 46 L11.5 56 L10.5 75 L9.5 97 L10.5 100 L3 100 L2.5 97 L1.5 62 L0 56 L-1.5 62 L-2.5 97 L-3 100 L-10.5 100 L-9.5 97 L-10.5 75 L-11.5 56 L-11 46 L-12 30 L-12.5 40 L-14 50 L-17 50 L-18 42 L-16 24 C-15 19 -10 17.5 -4 17 Z"/></g>
<ellipse cx="824.6" cy="488.4" rx="2.7" ry="4.4" fill="#b4683f" fill-opacity="0.8"/>
<path d="M845 485.6 L846.6 485.4 L850 494.4 L848.2 495 L845.6 491 Z" fill="#b4683f" fill-opacity="0.8"/>
<ellipse cx="934.2" cy="473.8" rx="2.5" ry="2.7" fill="#a98888"/>
<path d="M932 471.6 L938.8 472.2 L938.6 473.4 L932 473.2 Z" fill="#a98888"/>
<path d="M930.6 477.4 C932.6 476.6 935.4 476.8 937 478.2 L941.6 482.4 L948.6 484.2 L950.6 484.6 L950.2 486.4 L946.4 486.4 L939.8 485.6 L937.4 484 L937 490 L936.6 497.8 L935.4 503 L934 510.8 L930.4 510.8 L930 509 L928.6 505 L927.4 497.6 L926.2 490 L923.8 492 L921.6 493 L920.6 491.6 L922.4 489.4 L925.4 482.6 C926.6 479.8 928.4 478.2 930.6 477.4 Z" fill="url(#pgB)" fill-opacity="0.92"/>
<ellipse cx="980.6" cy="482.5" rx="3.4" ry="2.1" fill="#b48470" fill-opacity="0.92"/>
<path d="M978 486.6 C979.4 485.6 981.4 485.8 982.2 487 L983.2 493.6 L984.4 496 L993.8 501.4 L992.8 503 L984.6 500.2 L982.6 502.8 L981.6 502.4 L981.4 499.6 L976.2 499 L972 502 L970 500.8 L972.4 496.4 L975.2 493.2 Z" fill="#b06a48" fill-opacity="0.92"/>
<path d="M983.4 496.2 L988.2 490.8" fill="none" stroke="#b06a48" stroke-width="0.9"/>
</g>
</svg>
</div>
<svg id="icons" width="1536" height="821" viewBox="0 0 1536 821" style="left:0;top:0">
<rect x="4.05" y="3.85" width="12.8" height="12.3" rx="2.6" fill="#041c27" stroke="#319ccb" stroke-width="1.7"/>
<text x="6.6" y="13.1" font-family="Liberation Sans, sans-serif" font-size="8.3" font-weight="700" fill="#b8e2f0" textLength="7.9" lengthAdjust="spacingAndGlyphs">Ps</text>
<rect x="1441.5" y="9" width="10.5" height="3.6" fill="#cfcfcf"/>
<rect x="1471.5" y="4.2" width="8.2" height="6.4" fill="none" stroke="#cfcfcf" stroke-width="1.5"/>
<rect x="1468.8" y="7.2" width="7.6" height="6" fill="#535353" stroke="#cfcfcf" stroke-width="1.5"/>
<path d="M1507.5 4.6 L1516.5 12.6 M1516.5 4.6 L1507.5 12.6" stroke="#cfcfcf" stroke-width="1.4" fill="none"/>
<path d="M4 31 V51" stroke="#464646" stroke-width="1" stroke-dasharray="1 1.5" fill="none"/>
<path d="M17.2 41.3 L25.4 33 L33.6 41.3 L31.2 41.3 L31.2 47.3 L27 47.3 L27 43 L23.8 43 L23.8 47.3 L19.6 47.3 L19.6 41.3 Z" fill="#e2e2e2"/>
<path d="M61.8 40.8 L72.6 40.8 M67.2 35.4 L67.2 46.2" stroke="#e0e0e0" stroke-width="1.4" fill="none"/><path d="M74.6 40.8 L72 43.4 L72 38.2 Z" fill="#e0e0e0"/><path d="M59.8 40.8 L62.4 38.2 L62.4 43.4 Z" fill="#e0e0e0"/><path d="M67.2 48.2 L64.6 45.6 L69.8 45.6 Z" fill="#e0e0e0"/><path d="M67.2 33.4 L69.8 36 L64.6 36 Z" fill="#e0e0e0"/>
<path d="M85.3 40 L88.3 43.2 L91.3 40" fill="none" stroke="#d0d0d0" stroke-width="1.3"/>
<path d="M110 41 L112.3 43.6 L116.2 38.2" stroke="#2b2b2b" stroke-width="1.6" fill="none"/>
<path d="M235.7 40 L238.7 43 L241.7 40" fill="none" stroke="#d0d0d0" stroke-width="1.3"/>
<path d="M423 33 V48" stroke="#8e8e8e" stroke-width="1"/>
<rect x="425" y="35.8" width="6.6" height="3.9" fill="#8e8e8e"/><rect x="425" y="42" width="10.5" height="3.9" fill="#8e8e8e"/>
<path d="M455.3 33 V48" stroke="#8e8e8e" stroke-width="1"/>
<rect x="452" y="35.8" width="6.7" height="3.9" fill="#8e8e8e"/><rect x="449.7" y="42" width="11.2" height="3.9" fill="#8e8e8e"/>
<path d="M487.5 33 V48" stroke="#8e8e8e" stroke-width="1"/>
<rect x="478.7" y="35.8" width="6.8" height="3.9" fill="#8e8e8e"/><rect x="475" y="42" width="10.5" height="3.9" fill="#8e8e8e"/>
<path d="M507.5 35.3 H523.8 M507.5 45 H523.8" stroke="#8e8e8e" stroke-width="1"/>
<rect x="510.8" y="38.3" width="9.5" height="4.2" fill="#8e8e8e"/>
<path d="M551.3 35 H565.8" stroke="#8e8e8e" stroke-width="1"/>
<rect x="553.3" y="36.6" width="4.2" height="10" fill="#8e8e8e"/><rect x="559.7" y="36.6" width="4.4" height="6.7" fill="#8e8e8e"/>
<path d="M578 41.2 H591.7" stroke="#8e8e8e" stroke-width="1"/>
<rect x="580" y="35.3" width="3.9" height="10.9" fill="#8e8e8e"/><rect x="585.8" y="37.3" width="4.2" height="7.2" fill="#8e8e8e"/>
<path d="M603.8 46 H618" stroke="#8e8e8e" stroke-width="1"/>
<rect x="605.8" y="34.2" width="4.2" height="10.3" fill="#8e8e8e"/><rect x="612" y="37.5" width="4.2" height="7" fill="#8e8e8e"/>
<path d="M640 32.2 V48 M649.5 32.2 V48" stroke="#8e8e8e" stroke-width="1"/>
<rect x="643" y="35.3" width="4" height="9.7" fill="#8e8e8e"/>
<circle cx="682.5" cy="40.6" r="1.7" fill="#e6e6e6"/>
<circle cx="688.4" cy="40.6" r="1.7" fill="#e6e6e6"/>
<circle cx="694.3" cy="40.6" r="1.7" fill="#e6e6e6"/>
<circle cx="789.3" cy="37.6" r="3.6" fill="none" stroke="#878787" stroke-width="1"/>
<path d="M785.5 38.5 C780 38 777.5 41 780.5 43.8 M786 46 C792 47 797.5 45.5 796.5 42 C796 40.5 794.5 39.6 793 39.2" fill="none" stroke="#878787" stroke-width="1"/>
<path d="M780.2 46.6 L786.8 46.6 L783.6 42.6 Z" fill="#878787"/>
<circle cx="814" cy="40.3" r="3.4" fill="none" stroke="#878787" stroke-width="1"/>
<path d="M808.6 35.4 A7.4 7.4 0 1 1 806.8 42" fill="none" stroke="#878787" stroke-width="1"/>
<path d="M806.6 33.2 L811 34.2 L807.6 37.6 Z" fill="#878787"/>
<path d="M840 32.4 L843 35.6 L841.2 35.6 L841.2 39 L844.6 39 L844.6 37.2 L848 40.3 L844.6 43.4 L844.6 41.6 L841.2 41.6 L841.2 45 L843 45 L840 48.2 L837 45 L838.8 45 L838.8 41.6 L835.4 41.6 L835.4 43.4 L832 40.3 L835.4 37.2 L835.4 39 L838.8 39 L838.8 35.6 L837 35.6 Z" fill="none" stroke="#878787" stroke-width="0.9"/>
<circle cx="865.8" cy="40" r="3" fill="none" stroke="#878787" stroke-width="1"/>
<path d="M865.8 32.4 L868 35 L863.6 35 Z M857.2 40 L860 37.8 L860 42.2 Z M874.6 40 L871.8 37.8 L871.8 42.2 Z M865.8 48 L868.6 44.6 L863 44.6 Z" fill="#878787"/>
<path d="M865.8 35 V37 M860 40 H862.8 M868.8 40 H871.8 M865.8 43 V44.6" stroke="#878787" stroke-width="1"/>
<rect x="883" y="37" width="8.4" height="6.6" rx="0.8" fill="#878787"/>
<path d="M891.8 40.3 L894.6 38 L894.6 42.6 Z" fill="#878787"/>
<path d="M901.6 34.4 L896.6 40.3 L901.6 46.2" fill="none" stroke="#878787" stroke-width="1"/>
<circle cx="1445" cy="39.4" r="5.4" fill="none" stroke="#e0e0e0" stroke-width="1.5"/>
<path d="M1448.8 43.4 L1452.6 47.2" stroke="#e0e0e0" stroke-width="1.8" fill="none"/>
<rect x="1468.2" y="35" width="15" height="11.8" fill="none" stroke="#e0e0e0" stroke-width="1.5"/>
<rect x="1470.2" y="37.2" width="2.6" height="7.2" fill="#e0e0e0"/>
<path d="M1494.9 39.6 L1498 43 L1501.1 39.6" fill="none" stroke="#d8d8d8" stroke-width="1.3"/>
<path d="M1518 35.8 H1514.2 V46.6 H1528.2 V35.8 H1524.4" fill="none" stroke="#e6e6e6" stroke-width="1.7"/>
<path d="M1521.2 42 V33" stroke="#e6e6e6" stroke-width="1.7" fill="none"/>
<path d="M1517.8 35 L1521.2 31.2 L1524.6 35 Z" fill="#e6e6e6"/>
<path d="M3.2 60.6 L5.8 63.3 L3.2 66 M7.4 60.6 L10 63.3 L7.4 66" fill="none" stroke="#c8c8c8" stroke-width="1.1"/>
<path d="M8 75.5 H27" stroke="#444444" stroke-width="3" stroke-dasharray="1 1" fill="none" shape-rendering="crispEdges"/>
<path d="M11.7 100 L22.5 100 M17.1 94.6 L17.1 105.4" stroke="#e2e2e2" stroke-width="1.4" fill="none"/><path d="M24.5 100 L21.9 102.6 L21.9 97.4 Z" fill="#e2e2e2"/><path d="M9.7 100 L12.3 97.4 L12.3 102.6 Z" fill="#e2e2e2"/><path d="M17.1 107.4 L14.5 104.8 L19.7 104.8 Z" fill="#e2e2e2"/><path d="M17.1 92.6 L19.7 95.2 L14.5 95.2 Z" fill="#e2e2e2"/>
<path d="M29.8 109 L26.6 109 L29.8 105.8 Z" fill="#d6d6d6"/>
<rect x="9.9" y="119.9" width="14.9" height="11.4" fill="none" stroke="#d6d6d6" stroke-width="1.4" stroke-dasharray="3.2 2.1" stroke-dashoffset="1.6"/>
<path d="M29.8 134.3 L26.6 134.3 L29.8 131.1 Z" fill="#d6d6d6"/>
<path d="M9.8 146 L18 149.6 L23.9 143.8 L24.6 152.4 L16.6 154.8 M14.4 154.2 L9.8 146" fill="none" stroke="#d6d6d6" stroke-width="1.3" stroke-linejoin="miter"/>
<circle cx="15.6" cy="155.2" r="1.6" fill="none" stroke="#d6d6d6" stroke-width="1.1"/>
<path d="M14.2 155.8 L9.8 158.4 M16.4 156.8 L14.4 159.8" fill="none" stroke="#d6d6d6" stroke-width="1.2"/>
<path d="M29.8 160.6 L26.6 160.6 L29.8 157.4 Z" fill="#d6d6d6"/>
<path d="M10.9 183.7 L20.6 175" stroke="#d6d6d6" stroke-width="3.7" stroke-linecap="round" fill="none"/>
<path d="M19.2 176.3 L20.9 174.8" stroke="#535353" stroke-width="1.3" stroke-linecap="round" fill="none"/>
<path d="M14.6 169.3 L15.3 171.1 L17.1 171.8 L15.3 172.5 L14.6 174.3 L13.9 172.5 L12.1 171.8 L13.9 171.1 Z" fill="#d6d6d6"/><path d="M25.5 169.3 L26.2 171.1 L28 171.8 L26.2 172.5 L25.5 174.3 L24.8 172.5 L23 171.8 L24.8 171.1 Z" fill="#d6d6d6"/><path d="M24.4 176.8 L24.988 178.312 L26.5 178.9 L24.988 179.488 L24.4 181 L23.812 179.488 L22.3 178.9 L23.812 178.312 Z" fill="#d6d6d6"/>
<path d="M29.8 186.9 L26.6 186.9 L29.8 183.7 Z" fill="#d6d6d6"/>
<path d="M7.4 199.6 H9.4 M10.6 199.6 H21.3 V212.4 M12.5 196 V208.4 H23 M24.2 208.4 H26.2" fill="none" stroke="#d6d6d6" stroke-width="1.6"/>
<path d="M29.8 212.8 L26.6 212.8 L29.8 209.6 Z" fill="#d6d6d6"/>
<path d="M10 223.7 H25.4 V236.2 H10 Z M10 223.7 L25.4 236.2 M25.4 223.7 L10 236.2" fill="none" stroke="#d6d6d6" stroke-width="1.3"/>
<rect x="9" y="222.7" width="2" height="2" fill="#d6d6d6"/>
<rect x="24.4" y="222.7" width="2" height="2" fill="#d6d6d6"/>
<rect x="9" y="235.2" width="2" height="2" fill="#d6d6d6"/>
<rect x="24.4" y="235.2" width="2" height="2" fill="#d6d6d6"/>
<path d="M17.3 252.6 L11 258.9 C9.6 260.4 9.6 261.6 10.3 262.3 C11 263 12.2 263 13.7 261.6 L20 255.3" fill="none" stroke="#d6d6d6" stroke-width="1.3"/>
<path d="M15.8 251.2 L17.4 249.6 L18.4 250.6 L20.2 248.8 C21.4 247.4 23.4 247.4 24.4 248.4 C25.4 249.4 25.4 251.2 24 252.6 L22.2 254.4 L23.2 255.4 L21.6 257 Z" fill="#d6d6d6"/>
<path d="M29.8 265.4 L26.6 265.4 L29.8 262.2 Z" fill="#d6d6d6"/>
<g transform="translate(17.8 281) rotate(-37)"><rect x="-9" y="-3.9" width="18" height="7.8" rx="1.4" fill="#d6d6d6"/><path d="M-3.3 -3.9 V3.9 M-1.1 -3.9 V3.9 M1.1 -3.9 V3.9 M3.3 -3.9 V3.9" stroke="#535353" stroke-width="0.9"/></g>
<path d="M29.8 291.3 L26.6 291.3 L29.8 288.1 Z" fill="#d6d6d6"/>
<path d="M24.8 300.3 C25.4 300.9 25 301.9 24.4 302.8 L18.3 311 L16.3 309.3 L23 301 C23.6 300.3 24.3 299.9 24.8 300.3 Z" fill="#d6d6d6"/>
<path d="M15.6 310 L17.6 311.8 C18.4 313.6 16.8 315.6 14.6 315.6 C13 315.6 11.4 315.6 10.2 315.9 C11.8 314.6 11.8 312.8 12.8 311.4 C13.6 310.2 14.8 309.7 15.6 310 Z" fill="#d6d6d6"/>
<path d="M29.8 317.6 L26.6 317.6 L29.8 314.4 Z" fill="#d6d6d6"/>
<circle cx="17.1" cy="329.9" r="3.5" fill="#d6d6d6"/>
<path d="M15.4 332 L15.9 336.4 H10.4 V339.6 H23.8 V336.4 H18.3 L18.8 332 Z" fill="#d6d6d6"/>
<path d="M10.6 341.4 H23.6" stroke="#d6d6d6" stroke-width="1.1"/>
<path d="M29.8 343.4 L26.6 343.4 L29.8 340.2 Z" fill="#d6d6d6"/>
<path d="M24.8 353.6 C25.4 354.2 25 355.2 24.4 356 L18.6 363.6 L16.7 362 L23 354.3 C23.6 353.6 24.3 353.2 24.8 353.6 Z" fill="#d6d6d6"/>
<path d="M16 362.6 L18 364.3 C18.7 366 17.2 368 15.2 368 C13.6 368 12 368 10.8 368.4 C12.4 367 12.4 365.3 13.3 364 C14.1 362.8 15.2 362.3 16 362.6 Z" fill="#d6d6d6"/>
<path d="M7.2 359.6 L12.4 359.6 L9.6 355.8 Z" fill="#d6d6d6"/>
<path d="M11.2 357.6 C13 355.2 16 354.6 18.2 356.4" fill="none" stroke="#d6d6d6" stroke-width="1.1"/>
<path d="M22.8 360.5 C23.6 363 22.2 366 19.6 367" fill="none" stroke="#9a9a9a" stroke-width="0.9" stroke-dasharray="1.2 1.2"/>
<path d="M29.8 369.3 L26.6 369.3 L29.8 366.1 Z" fill="#d6d6d6"/>
<path d="M9.9 389.7 L19.9 380.4 L24.4 384.6 L15.6 392.8 H12.6 Z" fill="none" stroke="#d6d6d6" stroke-width="1.2" stroke-linejoin="round"/>
<path d="M14.2 385.7 L19.9 380.4 L24.4 384.6 L18.8 389.9 Z" fill="#d6d6d6"/>
<path d="M15 393 H24.6" stroke="#d6d6d6" stroke-width="1.2"/>
<path d="M29.8 395.6 L26.6 395.6 L29.8 392.4 Z" fill="#d6d6d6"/>
<path d="M9 414.2 L16.2 407.2 L23 413.7 L15.7 420.9 Z" fill="none" stroke="#d6d6d6" stroke-width="1.3" stroke-linejoin="round"/>
<path d="M14.8 408.8 C13.4 407 12 405.2 12.8 404.6 C13.8 403.9 15.6 406.4 17.4 410.6" fill="none" stroke="#d6d6d6" stroke-width="1.2"/>
<circle cx="17.5" cy="410.9" r="1.2" fill="#d6d6d6"/>
<path d="M24.6 413.2 C26 415.4 26.6 416.4 26.4 417.4 C26.2 418.6 25.4 419.2 24.4 419.2 C23.2 419.2 22.4 418.4 22.4 417.2 C22.4 416.2 23.4 414.8 24.6 413.2 Z" fill="#d6d6d6"/>
<path d="M29.8 421.4 L26.6 421.4 L29.8 418.2 Z" fill="#d6d6d6"/>
<path d="M12 436.6 C12.4 433.4 15 431.8 18.4 431.8 L22.4 431.8 C23.4 431.8 23.9 432.4 23.8 433.6 L23 439.4 C22.7 441.4 21.4 442.6 19.6 442.8 L18.4 442.9 L19.3 440.8 L18.2 440.3 L15.6 444.6 C14.6 446.2 13 446.8 11.6 446.2 C10.4 445.7 10.6 444.6 11.6 443.8 L14.6 440.2 L13.8 439.8 C12.4 439.2 11.8 438.2 12 436.6 Z" fill="#d6d6d6"/>
<path d="M29.8 447.8 L26.6 447.8 L29.8 444.6 Z" fill="#d6d6d6"/>
<circle cx="19.5" cy="462.4" r="5.4" fill="#d6d6d6"/>
<path d="M15.8 466.2 L9.8 472.3" stroke="#d6d6d6" stroke-width="1.6" fill="none"/>
<path d="M29.8 473.6 L26.6 473.6 L29.8 470.4 Z" fill="#d6d6d6"/>
<path d="M19.4 485.8 L23.2 489.4 L18.8 495.6 L10.6 497.6 L12.4 489.6 Z" fill="none" stroke="#d6d6d6" stroke-width="1.3" stroke-linejoin="round"/>
<path d="M10.8 497.4 L16.4 491.8" stroke="#d6d6d6" stroke-width="1.1" fill="none"/>
<circle cx="16.8" cy="491.4" r="1.2" fill="#d6d6d6"/>
<path d="M20 485.2 L21.6 483.8 L25 487.2 L23.8 488.8 Z" fill="#d6d6d6"/>
<path d="M29.8 499.9 L26.6 499.9 L29.8 496.7 Z" fill="#d6d6d6"/>
<text x="17.4" y="524.2" font-family="Liberation Serif, serif" font-size="21" fill="#d6d6d6" text-anchor="middle">T</text>
<path d="M29.8 526.2 L26.6 526.2 L29.8 523 Z" fill="#d6d6d6"/>
<path d="M12.8 535.6 L12.8 548.6 L16 545.7 L18.4 551.2 L20.6 550.2 L18.3 544.9 L22.5 544.6 Z" fill="#141414" stroke="#d6d6d6" stroke-width="1.1" stroke-linejoin="round"/>
<path d="M29.8 552.1 L26.6 552.1 L29.8 548.9 Z" fill="#d6d6d6"/>
<path d="M13.4 563.6 C15.6 563.2 16.2 564.6 17.8 564.2 C19.4 563.8 19.6 562.2 21.2 562.4 C22.8 562.6 22.2 564.6 22.8 565.4 C23.6 566.4 25.8 565.8 26 567.4 C26.2 569 23.6 569.4 23 570.6 C22.4 571.8 23.8 573.8 22.4 574.8 C21 575.8 19.6 573.8 18.2 573.4 C16.4 572.9 15.4 574.4 13.6 574.8 C11.4 575.3 9.2 574.6 9 573 C8.8 571.2 11.4 570.8 12.2 569.4 C13 568 11.2 564 13.4 563.6 Z" fill="#737373" stroke="#d6d6d6" stroke-width="1.1"/>
<path d="M29.8 577.9 L26.6 577.9 L29.8 574.7 Z" fill="#d6d6d6"/>
<rect x="14.2" y="590.4" width="1.95" height="9" rx="0.95" fill="#d6d6d6"/>
<rect x="16.45" y="588.2" width="1.95" height="9" rx="0.95" fill="#d6d6d6"/>
<rect x="18.7" y="587.8" width="1.95" height="9" rx="0.95" fill="#d6d6d6"/>
<rect x="20.95" y="589.6" width="1.95" height="9" rx="0.95" fill="#d6d6d6"/>
<path d="M14.2 595.6 H22.9 L23.4 593.2 C23.8 592 25 592.4 24.8 593.6 L23.6 599 C23 601.4 21.4 602.9 19 602.9 L17.6 602.9 C15.6 602.9 14.4 601.9 13.2 600.3 L9.9 595.7 C9.3 594.7 10.5 593.7 11.5 594.5 L14.2 597.4 Z" fill="#d6d6d6"/>
<path d="M29.8 604.2 L26.6 604.2 L29.8 601 Z" fill="#d6d6d6"/>
<circle cx="15.1" cy="618.9" r="5.7" fill="none" stroke="#d6d6d6" stroke-width="1.4"/>
<path d="M19.2 623.2 L24.9 629" stroke="#d6d6d6" stroke-width="1.9" fill="none"/>
<path d="M14.6 615.6 C16.4 615.4 18 616.6 18.3 618.2" fill="none" stroke="#d6d6d6" stroke-width="0.9"/>
<circle cx="11.2" cy="647.9" r="1.8" fill="#e4e4e4"/>
<circle cx="17.1" cy="647.9" r="1.8" fill="#e4e4e4"/>
<circle cx="22.9" cy="647.9" r="1.8" fill="#e4e4e4"/>
<path d="M29.8 656.4 L26.6 656.4 L29.8 653.2 Z" fill="#d6d6d6"/>
<rect x="6" y="671" width="6.8" height="6.8" fill="#e2e2e2"/>
<rect x="2.9" y="668" width="6.4" height="6.4" fill="#0a0a0a" stroke="#e2e2e2" stroke-width="1.1"/>
<path d="M22 669.6 H26.6 V674.6" fill="none" stroke="#e2e2e2" stroke-width="1.4"/>
<path d="M19.4 669.6 L22.6 666.8 L22.6 672.4 Z M26.6 677.4 L23.8 674.2 L29.4 674.2 Z" fill="#e2e2e2"/>
<rect x="12.6" y="692.8" width="18.8" height="18.6" fill="#ffffff" stroke="#3a3a3a" stroke-width="1"/>
<rect x="2.2" y="682.8" width="19" height="19" fill="#3a3a3a"/>
<rect x="3.2" y="683.8" width="17" height="17" fill="#e6eef0"/>
<rect x="4.4" y="685" width="14.6" height="14.6" fill="#44717e"/>
<rect x="8.8" y="723.9" width="16.6" height="12.2" rx="1" fill="none" stroke="#c4c4c4" stroke-width="1.3"/>
<circle cx="17.1" cy="730" r="4" fill="none" stroke="#9a9a9a" stroke-width="1" stroke-dasharray="1.6 1"/>
<rect x="9.2" y="753.3" width="11" height="8" fill="none" stroke="#d0d0d0" stroke-width="1.3"/>
<rect x="14.3" y="750.2" width="11" height="8" fill="#535353" stroke="#d0d0d0" stroke-width="1.3"/>
<path d="M29.8 764.9 L26.6 764.9 L29.8 761.7 Z" fill="#d6d6d6"/>
<path d="M376.7 69.8 L382.5 75.6 M382.5 69.8 L376.7 75.6" stroke="#c4c4c4" stroke-width="1.2" fill="none"/>
<path d="M698.6 69.8 L704.4 75.6 M704.4 69.8 L698.6 75.6" stroke="#a8a8a8" stroke-width="1.2" fill="none"/>
<path d="M82.5 87.4V104M119.5 87.4V104M157.5 87.4V104M194.5 87.4V104M232.5 87.4V104M269.5 87.4V104M307.5 87.4V104M344.5 87.4V104M382.5 87.4V104M419.5 87.4V104M456.5 87.4V104M494.5 87.4V104M531.5 87.4V104M569.5 87.4V104M606.5 87.4V104M644.5 87.4V104M681.5 87.4V104M719.5 87.4V104M756.5 87.4V104M793.5 87.4V104M831.5 87.4V104M868.5 87.4V104M906.5 87.4V104M943.5 87.4V104M981.5 87.4V104M1018.5 87.4V104M1056.5 87.4V104M1093.5 87.4V104" stroke="#6c6c6c" stroke-width="1" fill="none"/>
<path d="M63.5 98.6V104M101.5 98.6V104M138.5 98.6V104M176.5 98.6V104M213.5 98.6V104M250.5 98.6V104M288.5 98.6V104M325.5 98.6V104M363.5 98.6V104M400.5 98.6V104M438.5 98.6V104M475.5 98.6V104M513.5 98.6V104M550.5 98.6V104M587.5 98.6V104M625.5 98.6V104M662.5 98.6V104M700.5 98.6V104M737.5 98.6V104M775.5 98.6V104M812.5 98.6V104M850.5 98.6V104M887.5 98.6V104M925.5 98.6V104M962.5 98.6V104M999.5 98.6V104M1037.5 98.6V104M1074.5 98.6V104M73.5 100.4V104M91.5 100.4V104M110.5 100.4V104M129.5 100.4V104M147.5 100.4V104M166.5 100.4V104M185.5 100.4V104M204.5 100.4V104M222.5 100.4V104M241.5 100.4V104M260.5 100.4V104M279.5 100.4V104M297.5 100.4V104M316.5 100.4V104M335.5 100.4V104M353.5 100.4V104M372.5 100.4V104M391.5 100.4V104M410.5 100.4V104M428.5 100.4V104M447.5 100.4V104M466.5 100.4V104M484.5 100.4V104M503.5 100.4V104M522.5 100.4V104M541.5 100.4V104M559.5 100.4V104M578.5 100.4V104M597.5 100.4V104M616.5 100.4V104M634.5 100.4V104M653.5 100.4V104M672.5 100.4V104M690.5 100.4V104M709.5 100.4V104M728.5 100.4V104M747.5 100.4V104M765.5 100.4V104M784.5 100.4V104M803.5 100.4V104M822.5 100.4V104M840.5 100.4V104M859.5 100.4V104M878.5 100.4V104M896.5 100.4V104M915.5 100.4V104M934.5 100.4V104M953.5 100.4V104M971.5 100.4V104M990.5 100.4V104M1009.5 100.4V104M1028.5 100.4V104M1046.5 100.4V104M1065.5 100.4V104M1084.5 100.4V104M1102.5 100.4V104" stroke="#6c6c6c" stroke-width="1" fill="none"/>
<path d="M38.5 115.5H55M38.5 152.5H55M38.5 190.5H55M38.5 227.5H55M38.5 265.5H55M38.5 302.5H55M38.5 340.5H55M38.5 377.5H55M38.5 415.5H55M38.5 452.5H55M38.5 490.5H55M38.5 527.5H55M38.5 565.5H55M38.5 602.5H55M38.5 640.5H55M38.5 677.5H55M38.5 715.5H55M38.5 752.5H55M38.5 790.5H55" stroke="#6c6c6c" stroke-width="1" fill="none"/>
<path d="M51.2 106.5H55M51.2 124.5H55M49.4 134.5H55M51.2 143.5H55M51.2 162.5H55M49.4 171.5H55M51.2 181.5H55M51.2 199.5H55M49.4 209.5H55M51.2 218.5H55M51.2 237.5H55M49.4 246.5H55M51.2 255.5H55M51.2 274.5H55M49.4 284.5H55M51.2 293.5H55M51.2 312.5H55M49.4 321.5H55M51.2 330.5H55M51.2 349.5H55M49.4 359.5H55M51.2 368.5H55M51.2 387.5H55M49.4 396.5H55M51.2 405.5H55M51.2 424.5H55M49.4 434.5H55M51.2 443.5H55M51.2 462.5H55M49.4 471.5H55M51.2 480.5H55M51.2 499.5H55M49.4 508.5H55M51.2 518.5H55M51.2 537.5H55M49.4 546.5H55M51.2 555.5H55M51.2 574.5H55M49.4 583.5H55M51.2 593.5H55M51.2 612.5H55M49.4 621.5H55M51.2 630.5H55M51.2 649.5H55M49.4 658.5H55M51.2 668.5H55M51.2 687.5H55M49.4 696.5H55M51.2 705.5H55M51.2 724.5H55M49.4 733.5H55M51.2 743.5H55M51.2 761.5H55M49.4 771.5H55M51.2 780.5H55M51.2 799.5H55" stroke="#6c6c6c" stroke-width="1" fill="none"/>
<path d="M50.8 87.5V103.5M39 100H54.5" stroke="#5c5c5c" stroke-width="1" stroke-dasharray="1 1" fill="none"/>
<path d="M262 813.6 L265.2 817.8 L262 822" stroke="#c8c8c8" stroke-width="1.1" fill="none"/>
<path d="M1154 60.7 L1151.4 63.4 L1154 66.1 M1158 60.7 L1155.4 63.4 L1158 66.1" fill="none" stroke="#c4c4c4" stroke-width="1.1"/>
<path d="M1525.2 60.5 L1528 63.3 L1525.2 66.1 M1529.2 60.5 L1532 63.3 L1529.2 66.1" fill="none" stroke="#c4c4c4" stroke-width="1.1"/>
<path d="M1135 75.5 H1155" stroke="#464646" stroke-width="3" stroke-dasharray="1 1" fill="none" shape-rendering="crispEdges"/>
<path d="M1135 144.5 H1155" stroke="#464646" stroke-width="3" stroke-dasharray="1 1" fill="none" shape-rendering="crispEdges"/>
<path d="M1135 213.5 H1155" stroke="#464646" stroke-width="3" stroke-dasharray="1 1" fill="none" shape-rendering="crispEdges"/>
<path d="M1141.2 84.6 L1145.6 86.6 L1145.6 92 L1141.2 94.4 L1136.8 92 L1136.8 86.6 Z M1136.8 86.6 L1141.2 88.8 L1145.6 86.6 M1141.2 88.8 V94.4" fill="none" stroke="#dadada" stroke-width="1"/>
<rect x="1148.2" y="84.6" width="4.2" height="3.6" fill="#dadada"/><rect x="1148.2" y="90" width="4.2" height="3.6" fill="#dadada"/>
<rect x="1136.8" y="96.6" width="15.6" height="4.4" fill="#dadada"/>
<path d="M1148.4 98 L1151.2 98 L1149.8 99.8 Z" fill="#444"/>
<circle cx="1144.8" cy="121" r="8" fill="none" stroke="#dadada" stroke-width="1.3"/>
<path d="M1144.8 119.6 V125.6" stroke="#dadada" stroke-width="1.6"/><circle cx="1144.8" cy="116.8" r="1" fill="#dadada"/>
<path d="M1135.2 154.6 H1137 M1138.4 154.6 H1141.8 M1135.2 157.4 H1137 M1138.4 157.4 H1141.8 M1135.2 160.2 H1137 M1138.4 160.2 H1141.8" stroke="#dadada" stroke-width="1.1"/>
<path d="M1155 155.6 C1155.6 156.2 1155.2 157 1154.6 157.8 L1147.6 164.6 L1145.8 162.8 L1153.2 156 C1153.8 155.4 1154.5 155.2 1155 155.6 Z" fill="#dadada"/>
<path d="M1145 163.4 L1147 165.4 C1147.4 167.2 1145.8 169 1143.6 169 C1142 169 1140.2 169.2 1138.8 169.8 C1140.6 168.4 1140.8 166.6 1141.8 165 C1142.6 163.8 1144 163.2 1145 163.4 Z" fill="#dadada"/>
<path d="M1134.6 186.4 H1154.4 M1134.6 194.4 H1154.4" stroke="#dadada" stroke-width="1.4"/>
<path d="M1137 183.6 L1144 183.6 C1146 183.6 1146 189.2 1144 189.2 L1137 189.2 C1135.4 189.2 1135.4 183.6 1137 183.6 Z" fill="#dadada"/>
<path d="M1153.6 190.2 L1153.6 198.6 L1148 196.6 C1145.6 195.8 1145.6 193 1148 192.2 Z" fill="#dadada"/>
<text x="1137.2" y="239" font-family="Liberation Sans, sans-serif" font-size="18" fill="#dadada" textLength="11.5" lengthAdjust="spacingAndGlyphs">A</text>
<path d="M1151.4 223.6 V240.6" stroke="#dadada" stroke-width="1.2"/>
<path d="M1146.2 253.2 H1150.6 V267.6 H1148.8 V254.8 H1147.4 V267.6 H1145.6 V260.2 C1141.6 260.2 1139.2 259 1139.2 256.6 C1139.2 254.4 1141.8 253.2 1146.2 253.2 Z" fill="#dadada"/>
<path d="M1522 81.5 h10 M1522 83.5 h10 M1522 85.5 h10 M1522 87.5 h10" stroke="#b6b6b6" stroke-width="1" fill="none" shape-rendering="crispEdges"/>
<path d="M1522 232.5 h10 M1522 234.5 h10 M1522 236.5 h10 M1522 238.5 h10" stroke="#b6b6b6" stroke-width="1" fill="none" shape-rendering="crispEdges"/>
<path d="M1522 535.5 h10 M1522 537.5 h10 M1522 539.5 h10 M1522 541.5 h10" stroke="#b6b6b6" stroke-width="1" fill="none" shape-rendering="crispEdges"/>
<circle cx="1335.3" cy="152.2" r="5.6" fill="none" stroke="#f4f4f4" stroke-width="1.2"/>
<path d="M1494 144.4 L1497.6 144.4 L1500.4 147.6 L1497.6 150.8 L1494 150.8 Z" fill="#f0f0f0" stroke="#333" stroke-width="0.5"/>
<circle cx="1182.4" cy="265.6" r="3.3" fill="none" stroke="#dadada" stroke-width="1.3"/><path d="M1184.8 268.2 L1187.8 271.4" stroke="#dadada" stroke-width="1.5"/>
<path d="M1247 266 L1250 269.2 L1253 266" fill="none" stroke="#d0d0d0" stroke-width="1.3"/>
<rect x="1269" y="262" width="12.4" height="9.8" rx="0.8" fill="none" stroke="#dadada" stroke-width="1.2"/>
<path d="M1270.6 270.4 L1274 266 L1276.2 268.4 L1277.8 267 L1280.2 270.4 Z" fill="#dadada"/><circle cx="1277.8" cy="264.8" r="0.9" fill="#dadada"/>
<circle cx="1298.8" cy="266.8" r="5.2" fill="none" stroke="#dadada" stroke-width="1.2"/>
<path d="M1302.5 263.1 A5.2 5.2 0 0 1 1295.1 270.5 Z" fill="#dadada"/>
<text x="1323" y="273" font-family="Liberation Serif, serif" font-size="16" font-weight="700" fill="#dadada" text-anchor="middle">T</text>
<rect x="1343" y="262.4" width="9.4" height="9" fill="none" stroke="#dadada" stroke-width="1.1"/>
<rect x="1341.5" y="260.9" width="3" height="3" fill="#dadada"/>
<rect x="1350.9" y="260.9" width="3" height="3" fill="#dadada"/>
<rect x="1341.5" y="269.9" width="3" height="3" fill="#dadada"/>
<rect x="1350.9" y="269.9" width="3" height="3" fill="#dadada"/>
<path d="M1370.8 261.2 H1375.4 L1378.2 264 V272.4 H1370.8 Z" fill="none" stroke="#dadada" stroke-width="1.2"/>
<rect x="1366.8" y="266.2" width="5.8" height="6.2" fill="#dadada" stroke="#535353" stroke-width="0.8"/>
<rect x="1390.4" y="259.4" width="7.4" height="16.4" rx="3.7" fill="#3c3c3c" stroke="#484848" stroke-width="0.8"/>
<circle cx="1394.1" cy="262.6" r="3.6" fill="#e4e4e4"/>
<path d="M1289.4 294.2 L1292.4 297.4 L1295.4 294.2" fill="none" stroke="#d0d0d0" stroke-width="1.3"/>
<path d="M1387.2 294.2 L1390.2 297.4 L1393.2 294.2" fill="none" stroke="#d0d0d0" stroke-width="1.3"/>
<path d="M1387.2 322.2 L1390.2 325.4 L1393.2 322.2" fill="none" stroke="#d0d0d0" stroke-width="1.3"/>
<rect x="1205.4" y="317.6" width="11.4" height="11.4" fill="#e8e8e8"/>
<rect x="1206.4" y="318.6" width="3" height="3" fill="#484848"/>
<rect x="1206.4" y="325" width="3" height="3" fill="#484848"/>
<rect x="1209.6" y="321.8" width="3" height="3" fill="#484848"/>
<rect x="1212.8" y="318.6" width="3" height="3" fill="#484848"/>
<rect x="1212.8" y="325" width="3" height="3" fill="#484848"/>
<path d="M1240.4 317 C1241 317.6 1240.6 318.4 1240 319.2 L1234.4 326 L1232.8 324.6 L1238.6 317.6 C1239.2 317 1239.9 316.6 1240.4 317 Z" fill="#dadada"/>
<path d="M1232.2 325.2 L1233.8 326.6 C1234.2 328.2 1233 329.6 1231.4 329.6 C1230.2 329.6 1229.2 329.8 1228.2 330.2 C1229.4 329 1229.4 327.6 1230 326.4 C1230.6 325.4 1231.6 325 1232.2 325.2 Z" fill="#dadada"/>
<path d="M1250.6 323.4 L1259.4 323.4 M1255 319 L1255 327.8" stroke="#dadada" stroke-width="1.2" fill="none"/><path d="M1261.4 323.4 L1259.1 325.7 L1259.1 321.1 Z" fill="#dadada"/><path d="M1248.6 323.4 L1250.9 321.1 L1250.9 325.7 Z" fill="#dadada"/><path d="M1255 329.8 L1252.7 327.5 L1257.3 327.5 Z" fill="#dadada"/><path d="M1255 317 L1257.3 319.3 L1252.7 319.3 Z" fill="#dadada"/>
<path d="M1273 316.6 V328 H1285.4 M1270.2 319.6 H1282.6 V330.6" fill="none" stroke="#dadada" stroke-width="1.3"/>
<path d="M1281.4 318 L1284.4 317.2 L1283.6 320.2 Z" fill="#dadada"/>
<rect x="1294.6" y="322.2" width="10.4" height="8" rx="1" fill="#dadada"/>
<path d="M1296.8 322.4 V320 A3 3 0 0 1 1302.8 320 V322.4" fill="none" stroke="#dadada" stroke-width="1.5"/>
<rect x="1299.2" y="324.8" width="1.3" height="2.6" fill="#535353"/>
<path d="M1175.4 371.2 C1178.4 366.2 1185.2 366.2 1188.2 371.2 C1185.2 376.2 1178.4 376.2 1175.4 371.2 Z" fill="#e0e0e0"/><circle cx="1181.8" cy="371.2" r="2.7" fill="#535353"/><circle cx="1181.8" cy="371.2" r="1.5" fill="#e0e0e0"/>
<path d="M1175.4 397.7 C1178.4 392.7 1185.2 392.7 1188.2 397.7 C1185.2 402.7 1178.4 402.7 1175.4 397.7 Z" fill="#e0e0e0"/><circle cx="1181.8" cy="397.7" r="2.7" fill="#535353"/><circle cx="1181.8" cy="397.7" r="1.5" fill="#e0e0e0"/>
<path d="M1175.4 453.8 C1178.4 448.8 1185.2 448.8 1188.2 453.8 C1185.2 458.8 1178.4 458.8 1175.4 453.8 Z" fill="#e0e0e0"/><circle cx="1181.8" cy="453.8" r="2.7" fill="#535353"/><circle cx="1181.8" cy="453.8" r="1.5" fill="#e0e0e0"/>
<path d="M1203 345.4 L1218.6 343.6 L1218.6 346.2 Z M1203 347.4 L1218.6 347.6 L1218.6 352.6 Z M1209.6 342.8 L1218.6 342.2 L1218.6 343.2 L1209.6 344 Z" fill="#e8e8e8"/>
<rect x="1221.2" y="342.2" width="8.6" height="9.4" fill="#f2f2f2" stroke="#222" stroke-width="0.6"/><path d="M1222.4 347 h3 v3 h-3 Z M1225.6 343.6 h3.2 v3.4 h-3.2 Z" fill="#333"/>
<path d="M1201.8 369.1 L1205 372.5 L1208.2 369.1" fill="none" stroke="#d0d0d0" stroke-width="1.3"/>
<path d="M1213.2 365.8 H1218.2 L1219.6 367.4 H1226.6 V370 H1213.2 Z" fill="none" stroke="#dadada" stroke-width="1.1"/>
<rect x="1212.6" y="370" width="14.6" height="6.2" fill="#dadada"/>
<rect x="1238.4" y="424.2" width="8.6" height="9.4" fill="#f2f2f2" stroke="#222" stroke-width="0.6"/><path d="M1239.6 429 h3 v3 h-3 Z M1242.8 425.6 h3.2 v3.4 h-3.2 Z" fill="#333"/>
<rect x="1238.4" y="480.2" width="8.6" height="9.4" fill="#f2f2f2" stroke="#222" stroke-width="0.6"/><path d="M1239.6 485 h3 v3 h-3 Z M1242.8 481.6 h3.2 v3.4 h-3.2 Z" fill="#333"/>
<path d="M1526.2 349 L1529 346.2 L1531.8 349" fill="none" stroke="#b0b0b0" stroke-width="1.1"/>
<path d="M1526.2 485 L1529 487.8 L1531.8 485" fill="none" stroke="#b0b0b0" stroke-width="1.1"/>
<rect x="1334.6" y="505.6" width="7.6" height="5.6" rx="2.8" fill="none" stroke="#9a9a9a" stroke-width="1.2"/><rect x="1340.2" y="505.6" width="7.6" height="5.6" rx="2.8" fill="none" stroke="#9a9a9a" stroke-width="1.2"/>
<path d="M1338.6 508.4 H1343.8" stroke="#9a9a9a" stroke-width="1.2"/>
<text x="1369.4" y="513.4" font-family="Liberation Sans, sans-serif" font-style="italic" font-size="14.5" fill="#dadada" text-anchor="middle">fx</text>
<path d="M1374.6 514.6 h3.4 l-1.7 2 Z" fill="#dadada"/>
<rect x="1389.6" y="503.2" width="12.4" height="9.8" rx="0.8" fill="#dadada"/><circle cx="1395.8" cy="508.1" r="3.2" fill="#535353"/>
<circle cx="1422.8" cy="508" r="5.2" fill="none" stroke="#dadada" stroke-width="1.2"/>
<path d="M1426.5 504.3 A5.2 5.2 0 0 1 1419.1 511.7 Z" fill="#dadada"/>
<path d="M1429 514.6 h3.4 l-1.7 2 Z" fill="#dadada"/>
<path d="M1443.2 503.4 H1448 L1449.4 505 H1456.2 V514 H1443.2 Z" fill="#dadada"/>
<rect x="1471.6" y="502.8" width="11" height="11" rx="0.8" fill="none" stroke="#dadada" stroke-width="1.2"/><path d="M1477.1 505.6 V511 M1474.4 508.3 H1479.8" stroke="#dadada" stroke-width="1.4"/>
<path d="M1499.4 505.2 H1508.2 V513.4 C1508.2 514 1507.8 514.4 1507.2 514.4 H1500.4 C1499.8 514.4 1499.4 514 1499.4 513.4 Z" fill="none" stroke="#dadada" stroke-width="1.2"/>
<path d="M1498 504.4 H1509.6 M1501.8 504 V502.6 H1505.8 V504 M1501.8 507 V512.4 M1503.8 507 V512.4 M1505.8 507 V512.4" fill="none" stroke="#dadada" stroke-width="1.1"/>
<defs><linearGradient id="gradH" x1="0" x2="1" y1="0" y2="0"><stop offset="0" stop-color="#2a2a2a"/><stop offset="1" stop-color="#f2f2f2"/></linearGradient><linearGradient id="gradV" x1="0" x2="0" y1="0" y2="1"><stop offset="0" stop-color="#f2f2f2"/><stop offset="1" stop-color="#2a2a2a"/></linearGradient><linearGradient id="gradD" x1="0" x2="1" y1="0" y2="1"><stop offset="0" stop-color="#444"/><stop offset="0.5" stop-color="#eee"/><stop offset="1" stop-color="#444"/></linearGradient></defs>
<circle cx="1221" cy="582.6" r="4.2" fill="none" stroke="#dcdcdc" stroke-width="1.1"/><path d="M1221 578.4 A4.2 4.2 0 0 1 1221 586.8 Z" fill="#dcdcdc"/>
<path d="M1226.8 582.6 L1229.0 582.6 M1225.1 586.7 L1226.7 588.3 M1221.0 588.4 L1221.0 590.6 M1216.9 586.7 L1215.3 588.3 M1215.2 582.6 L1213.0 582.6 M1216.9 578.5 L1215.3 576.9 M1221.0 576.8 L1221.0 574.6 M1225.1 578.5 L1226.7 576.9 " stroke="#dcdcdc" stroke-width="1.1"/>
<path d="M1237 588.2 V583.6 L1238.4 580.6 L1239.6 583.2 L1241 579.2 L1242.4 582.8 L1243.8 577.2 L1245.4 582 L1246.8 578.2 L1248.2 583 L1249.8 579.6 L1251.2 583.2 L1252.6 581 L1253.8 583.6 V588.2 Z" fill="#dcdcdc"/>
<rect x="1261.8" y="576.6" width="15.4" height="12" fill="none" stroke="#dcdcdc" stroke-width="1.1"/>
<path d="M1266.9 576.6 V588.6 M1272.1 576.6 V588.6 M1261.8 580.6 H1277.2 M1261.8 584.6 H1277.2" stroke="#9a9a9a" stroke-width="0.7"/>
<path d="M1262.5 588 C1268.5 587.6 1270.5 577.6 1276.5 577.2" fill="none" stroke="#dcdcdc" stroke-width="1.1"/>
<rect x="1285.9" y="576.6" width="15.4" height="12" fill="#5e5e5e" stroke="#dcdcdc" stroke-width="1.1"/>
<path d="M1285.9 588.6 L1301.3 576.6 L1285.9 576.6 Z" fill="#dcdcdc"/>
<path d="M1287.6 580 h3.6 M1289.4 578.2 v3.6" stroke="#333" stroke-width="1"/>
<path d="M1295.6 585.6 h3.6" stroke="#eee" stroke-width="1"/>
<path d="M1318 576.2 L1325.2 588.2 L1310.8 588.2 Z" fill="url(#gradV)" stroke="#dcdcdc" stroke-width="1.1" transform="rotate(180 1318 582.2)"/>
<rect x="1201.7" y="603.7" width="15.4" height="12" fill="url(#gradH)" stroke="#dcdcdc" stroke-width="1.1"/>
<rect x="1202.25" y="604.25" width="14.3" height="3.6" fill="#dcdcdc"/>
<rect x="1203.2" y="604.25" width="1.9" height="3.2" fill="#3a3a3a"/>
<rect x="1206.7" y="604.25" width="1.9" height="3.2" fill="#3a3a3a"/>
<rect x="1210.2" y="604.25" width="1.9" height="3.2" fill="#3a3a3a"/>
<rect x="1213.7" y="604.25" width="1.9" height="3.2" fill="#3a3a3a"/>
<path d="M1201.7 608.1 H1217.1" stroke="#dcdcdc" stroke-width="0.9"/>
<path d="M1227.8 606.1 H1238.6 M1233.2 603.7 V606.9" stroke="#dcdcdc" stroke-width="1.1"/>
<circle cx="1233.2" cy="604.3" r="1.3" fill="none" stroke="#dcdcdc" stroke-width="0.9"/>
<path d="M1228.2 606.3 L1225.2 612.3 M1228.2 606.3 L1231.2 612.3" stroke="#dcdcdc" stroke-width="0.9"/>
<path d="M1224.9 612.3 A3.3 3.3 0 0 0 1231.5 612.3 Z" fill="#dcdcdc"/>
<path d="M1238.2 606.3 L1235.2 612.3 M1238.2 606.3 L1241.2 612.3" stroke="#dcdcdc" stroke-width="0.9"/>
<path d="M1234.9 612.3 A3.3 3.3 0 0 0 1241.5 612.3 Z" fill="#dcdcdc"/>
<rect x="1249.6" y="603.7" width="15.4" height="12" fill="#3a3a3a" stroke="#dcdcdc" stroke-width="1.1"/>
<rect x="1257.2" y="604.25" width="7.2" height="10.9" fill="#efefef"/>
<path d="M1274.3 605.7 h3 l1 -1.6 h4.4 l1 1.6 h2.6 v8.6 h-12 Z" fill="#dcdcdc"/>
<circle cx="1280.3" cy="610.1" r="2.8" fill="#535353"/>
<circle cx="1286.9" cy="614.1" r="3" fill="#535353" stroke="#dcdcdc" stroke-width="1"/>
<circle cx="1305.5" cy="606.7" r="4.6" fill="#8e8e8e"/><circle cx="1302.1" cy="612.1" r="4.6" fill="#e2e2e2" fill-opacity="0.92"/><circle cx="1308.9" cy="612.1" r="4.6" fill="#a8a8a8" fill-opacity="0.85"/>
<rect x="1322.2" y="603.7" width="15.4" height="12" fill="none" stroke="#dcdcdc" stroke-width="1.1"/>
<path d="M1327.3 603.7 V615.7 M1332.5 603.7 V615.7 M1322.2 607.7 H1337.6 M1322.2 611.7 H1337.6" stroke="#dcdcdc" stroke-width="1.1"/>
<rect x="1213.3" y="630.8" width="15.4" height="12" fill="#dedede" stroke="#dcdcdc" stroke-width="1.1"/>
<path d="M1213.8 642.3 L1228.2 631.3 L1228.2 642.3 Z" fill="#3a3a3a"/>
<path d="M1217.6 639.4 A4.2 4.2 0 0 1 1224.4 634.2 Z" fill="#3a3a3a"/>
<path d="M1224.4 634.2 A4.2 4.2 0 0 1 1217.6 639.4 Z" fill="#dedede"/>
<path d="M1214.4 641.8 L1227.6 631.8" stroke="#dedede" stroke-width="0.9"/>
<rect x="1237.7" y="630.8" width="15.4" height="12" fill="#d8d8d8" stroke="#dcdcdc" stroke-width="1.1"/>
<clipPath id="pclip"><rect x="1238.25" y="631.35" width="14.3" height="10.9"/></clipPath>
<g clip-path="url(#pclip)"><path d="M1238.2 638.3 l8 -8 l3 0 l-11 11 Z" fill="#7a7a7a"/><path d="M1238.2 642.3 l12 -12 l3 0 l-15 15 Z" fill="#4a4a4a"/><path d="M1241.4 643.3 l14 -14 l3 0 l-17 17 Z" fill="#9a9a9a"/><path d="M1246.6 643.3 l12 -12 l2.4 0 l-14.4 14.4 Z" fill="#5e5e5e"/></g>
<rect x="1261.8" y="630.8" width="15.4" height="12" fill="#3a3a3a" stroke="#dcdcdc" stroke-width="1.1"/>
<path d="M1262.3 638.4 L1264.9 636.2 L1266.5 637.8 L1268.9 634.8 L1270.5 636.4 L1272.9 633.2 L1274.3 634.6 L1276.7 631.4 L1276.7 631.4 V631.3 H1262.3 Z" fill="#efefef"/>
<path d="M1262.3 642.3 L1264.9 640.2 L1266.5 641.8 L1268.9 638.8 L1270.5 640.4 L1272.9 637.2 L1274.3 638.6 L1276.7 635.4 V642.3 H1262.3 Z" fill="#efefef"/>
<rect x="1285.9" y="630.8" width="15.4" height="12" fill="#e4e4e4" stroke="#dcdcdc" stroke-width="1.1"/>
<path d="M1286.4 631.3 L1293.6 636.8 L1286.4 642.3 Z M1300.8 631.3 L1293.6 636.8 L1300.8 642.3 Z" fill="#7a7a7a"/>
<rect x="1310.3" y="630.8" width="15.4" height="12" fill="url(#gradH)" stroke="#dcdcdc" stroke-width="1.1"/>
</svg>
<div id="labels">
<span class="t" id="t0" style="left:32.8px;top:0.5px;font-size:12px;color:#e6e6e6;transform:scaleX(0.8892);">File</span>
<span class="t" id="t1" style="left:63.0px;top:0.5px;font-size:12px;color:#e6e6e6;transform:scaleX(0.9426);">Edit</span>
<span class="t" id="t2" style="left:95.0px;top:0.5px;font-size:12px;color:#e6e6e6;transform:scaleX(0.9742);">Image</span>
<span class="t" id="t3" style="left:140.3px;top:0.5px;font-size:12px;color:#e6e6e6;transform:scaleX(0.9057);">Layer</span>
<span class="t" id="t4" style="left:180.8px;top:0.5px;font-size:12px;color:#e6e6e6;transform:scaleX(0.9187);">Type</span>
<span class="t" id="t5" style="left:217.5px;top:0.5px;font-size:12px;color:#e6e6e6;transform:scaleX(0.9233);">Select</span>
<span class="t" id="t6" style="left:260.3px;top:0.5px;font-size:12px;color:#e6e6e6;transform:scaleX(0.9898);">Filter</span>
<span class="t" id="t7" style="left:298.7px;top:0.5px;font-size:12px;color:#e6e6e6;transform:scaleX(0.9515);">3D</span>
<span class="t" id="t8" style="left:325.8px;top:0.5px;font-size:12px;color:#e6e6e6;transform:scaleX(0.9691);">View</span>
<span class="t" id="t9" style="left:362.8px;top:0.5px;font-size:12px;color:#e6e6e6;transform:scaleX(1.0284);">Window</span>
<span class="t" id="t10" style="left:419.2px;top:0.5px;font-size:12px;color:#e6e6e6;transform:scaleX(0.9924);">Help</span>
<span class="t" id="t11" style="left:123.0px;top:30.5px;font-size:11.5px;color:#dcdcdc;transform:scaleX(0.8618);">Auto-Select:</span>
<span class="t" id="t12" style="left:200.8px;top:30.3px;font-size:11px;color:#dcdcdc;transform:scaleX(0.8500);">Layer</span>
<span class="t" id="t13" style="left:279.5px;top:30.5px;font-size:11.5px;color:#dcdcdc;transform:scaleX(0.8732);">Show Transform Controls</span>
<span class="t" id="t14" style="left:719.7px;top:30.5px;font-size:11.5px;color:#818181;transform:scaleX(0.8584);">3D Mode:</span>
<span class="t" id="t15" style="left:48.5px;top:61.9px;font-size:10.5px;color:#ececec;transform:scaleX(1.0496);font-weight:700;">Enscape_2021-02-16-15-35-59.psd @ 129% (Layer 3, RGB/8) *</span>
<span class="t" id="t16" style="left:405.0px;top:61.9px;font-size:10.5px;color:#a6a6a6;transform:scaleX(1.0319);font-weight:700;">MANUAL OF SECTION (1).psd @ 12.1% (Lady 1, RGB/8)</span>
<span class="t" id="t17" style="left:1175.6px;top:71.5px;font-size:10.5px;color:#f0f0f0;transform:scaleX(0.9263);font-weight:700;-webkit-text-stroke:0.3px #f0f0f0;">Color</span>
<span class="t" id="t18" style="left:1217.7px;top:71.5px;font-size:10.5px;color:#a8a8a8;transform:scaleX(0.8978);font-weight:700;-webkit-text-stroke:0.3px #a8a8a8;">Swatches</span>
<span class="t" id="t19" style="left:1175.5px;top:222.3px;font-size:10.5px;color:#f0f0f0;transform:scaleX(0.8801);font-weight:700;-webkit-text-stroke:0.3px #f0f0f0;">Layers</span>
<span class="t" id="t20" style="left:1222.4px;top:222.3px;font-size:10.5px;color:#a8a8a8;transform:scaleX(0.9097);font-weight:700;-webkit-text-stroke:0.3px #a8a8a8;">Channels</span>
<span class="t" id="t21" style="left:1283.0px;top:222.3px;font-size:10.5px;color:#a8a8a8;transform:scaleX(0.8813);font-weight:700;-webkit-text-stroke:0.3px #a8a8a8;">Paths</span>
<span class="t" id="t22" style="left:1175.5px;top:525.4px;font-size:10.5px;color:#a8a8a8;transform:scaleX(0.9023);font-weight:700;-webkit-text-stroke:0.3px #a8a8a8;">Learn</span>
<span class="t" id="t23" style="left:1219.7px;top:525.4px;font-size:10.5px;color:#a8a8a8;transform:scaleX(0.9085);font-weight:700;-webkit-text-stroke:0.3px #a8a8a8;">Libraries</span>
<span class="t" id="t24" style="left:1277.9px;top:525.4px;font-size:10.5px;color:#f0f0f0;transform:scaleX(0.9372);font-weight:700;-webkit-text-stroke:0.3px #f0f0f0;">Adjustments</span>
<span class="t" id="t25" style="left:1192.6px;top:256.0px;font-size:11px;color:#dcdcdc;transform:scaleX(0.9078);">Kind</span>
<span class="t" id="t26" style="left:1178.8px;top:284.0px;font-size:11px;color:#dcdcdc;transform:scaleX(0.8857);">Normal</span>
<span class="t" id="t27" style="left:1306.9px;top:284.5px;font-size:11px;color:#dcdcdc;transform:scaleX(0.8945);">Opacity:</span>
<span class="t" id="t28" style="left:1350.8px;top:284.5px;font-size:11px;color:#dcdcdc;transform:scaleX(0.8955);">100%</span>
<span class="t" id="t29" style="left:1172.8px;top:313.0px;font-size:11px;color:#dcdcdc;transform:scaleX(0.8746);">Lock:</span>
<span class="t" id="t30" style="left:1327.7px;top:313.0px;font-size:11px;color:#dcdcdc;transform:scaleX(0.8943);">Fill:</span>
<span class="t" id="t31" style="left:1350.8px;top:313.0px;font-size:11px;color:#dcdcdc;transform:scaleX(0.8955);">100%</span>
<span class="t" id="t32" style="left:1241.9px;top:334.0px;font-size:11px;color:#dcdcdc;transform:scaleX(0.9118);">Enscape_2021-02-16-15-35-59_depth</span>
<span class="t" id="t33" style="left:1239.2px;top:360.7px;font-size:11px;color:#dcdcdc;transform:scaleX(0.9006);">Group 1</span>
<span class="t" id="t34" style="left:1258.1px;top:387.2px;font-size:11px;color:#dcdcdc;transform:scaleX(0.8855);">Layer 8</span>
<span class="t" id="t35" style="left:1258.1px;top:415.1px;font-size:11px;color:#dcdcdc;transform:scaleX(0.8860);">Group_Bikers</span>
<span class="t" id="t36" style="left:1258.1px;top:443.3px;font-size:11px;color:#dcdcdc;transform:scaleX(0.8855);">Layer 9</span>
<span class="t" id="t37" style="left:1258.1px;top:471.2px;font-size:11px;color:#dcdcdc;transform:scaleX(0.9054);">Girl_Walking_Dog</span>
<span class="t" id="t38" style="left:1175.5px;top:552.9px;font-size:11px;color:#dcdcdc;transform:scaleX(0.9211);">Add an adjustment</span>
<span class="t" id="t39" style="left:42.3px;top:808.0px;font-size:11px;color:#dcdcdc;transform:scaleX(0.9116);">129.45%</span>
<span class="t" id="t40" style="left:128.8px;top:808.0px;font-size:11px;color:#dcdcdc;transform:scaleX(0.8844);">Doc: 5.63M/152.4M</span>
<span class="t" id="t41" style="left:83.9px;top:87.0px;font-size:11px;color:#b6b6b6;transform:scaleX(0.9306);">0</span>
<span class="t" id="t42" style="left:121.4px;top:87.0px;font-size:11px;color:#b6b6b6;transform:scaleX(0.9306);">1</span>
<span class="t" id="t43" style="left:158.8px;top:87.0px;font-size:11px;color:#b6b6b6;transform:scaleX(0.9306);">2</span>
<span class="t" id="t44" style="left:196.2px;top:87.0px;font-size:11px;color:#b6b6b6;transform:scaleX(0.9306);">3</span>
<span class="t" id="t45" style="left:233.7px;top:87.0px;font-size:11px;color:#b6b6b6;transform:scaleX(0.9306);">4</span>
<span class="t" id="t46" style="left:271.1px;top:87.0px;font-size:11px;color:#b6b6b6;transform:scaleX(0.9306);">5</span>
<span class="t" id="t47" style="left:308.6px;top:87.0px;font-size:11px;color:#b6b6b6;transform:scaleX(0.9306);">6</span>
<span class="t" id="t48" style="left:346.1px;top:87.0px;font-size:11px;color:#b6b6b6;transform:scaleX(0.9306);">7</span>
<span class="t" id="t49" style="left:383.5px;top:87.0px;font-size:11px;color:#b6b6b6;transform:scaleX(0.9306);">8</span>
<span class="t" id="t50" style="left:421.0px;top:87.0px;font-size:11px;color:#b6b6b6;transform:scaleX(0.9306);">9</span>
<span class="t" id="t51" style="left:458.4px;top:87.0px;font-size:11px;color:#b6b6b6;transform:scaleX(0.9306);">10</span>
<span class="t" id="t52" style="left:495.9px;top:87.0px;font-size:11px;color:#b6b6b6;">11</span>
<span class="t" id="t53" style="left:533.3px;top:87.0px;font-size:11px;color:#b6b6b6;transform:scaleX(0.9306);">12</span>
<span class="t" id="t54" style="left:570.8px;top:87.0px;font-size:11px;color:#b6b6b6;transform:scaleX(0.9306);">13</span>
<span class="t" id="t55" style="left:608.2px;top:87.0px;font-size:11px;color:#b6b6b6;transform:scaleX(0.9306);">14</span>
<span class="t" id="t56" style="left:645.6px;top:87.0px;font-size:11px;color:#b6b6b6;transform:scaleX(0.9306);">15</span>
<span class="t" id="t57" style="left:683.1px;top:87.0px;font-size:11px;color:#b6b6b6;transform:scaleX(0.9306);">16</span>
<span class="t" id="t58" style="left:720.6px;top:87.0px;font-size:11px;color:#b6b6b6;transform:scaleX(0.9306);">17</span>
<span class="t" id="t59" style="left:758.0px;top:87.0px;font-size:11px;color:#b6b6b6;transform:scaleX(0.9306);">18</span>
<span class="t" id="t60" style="left:795.5px;top:87.0px;font-size:11px;color:#b6b6b6;transform:scaleX(0.9306);">19</span>
<span class="t" id="t61" style="left:832.9px;top:87.0px;font-size:11px;color:#b6b6b6;transform:scaleX(0.9306);">20</span>
<span class="t" id="t62" style="left:870.4px;top:87.0px;font-size:11px;color:#b6b6b6;transform:scaleX(0.9306);">21</span>
<span class="t" id="t63" style="left:907.8px;top:87.0px;font-size:11px;color:#b6b6b6;transform:scaleX(0.9306);">22</span>
<span class="t" id="t64" style="left:945.2px;top:87.0px;font-size:11px;color:#b6b6b6;transform:scaleX(0.9306);">23</span>
<span class="t" id="t65" style="left:982.7px;top:87.0px;font-size:11px;color:#b6b6b6;transform:scaleX(0.9306);">24</span>
<span class="t" id="t66" style="left:1020.2px;top:87.0px;font-size:11px;color:#b6b6b6;transform:scaleX(0.9306);">25</span>
<span class="t" id="t67" style="left:1057.6px;top:87.0px;font-size:11px;color:#b6b6b6;transform:scaleX(0.9306);">26</span>
<span class="t" id="t68" style="left:1095.1px;top:87.0px;font-size:11px;color:#b6b6b6;transform:scaleX(0.9306);">27</span>
<span class="t" id="t69" style="left:39.6px;top:113.1px;font-size:11px;color:#b6b6b6;transform:scaleX(0.9306);">2</span>
<span class="t" id="t70" style="left:39.6px;top:150.6px;font-size:11px;color:#b6b6b6;transform:scaleX(0.9306);">1</span>
<span class="t" id="t71" style="left:39.6px;top:188.1px;font-size:11px;color:#b6b6b6;transform:scaleX(0.9306);">0</span>
<span class="t" id="t72" style="left:39.6px;top:225.6px;font-size:11px;color:#b6b6b6;transform:scaleX(0.9306);">1</span>
<span class="t" id="t73" style="left:39.6px;top:263.1px;font-size:11px;color:#b6b6b6;transform:scaleX(0.9306);">2</span>
<span class="t" id="t74" style="left:39.6px;top:300.5px;font-size:11px;color:#b6b6b6;transform:scaleX(0.9306);">3</span>
<span class="t" id="t75" style="left:39.6px;top:338.0px;font-size:11px;color:#b6b6b6;transform:scaleX(0.9306);">4</span>
<span class="t" id="t76" style="left:39.6px;top:375.5px;font-size:11px;color:#b6b6b6;transform:scaleX(0.9306);">5</span>
<span class="t" id="t77" style="left:39.6px;top:413.0px;font-size:11px;color:#b6b6b6;transform:scaleX(0.9306);">6</span>
<span class="t" id="t78" style="left:39.6px;top:450.5px;font-size:11px;color:#b6b6b6;transform:scaleX(0.9306);">7</span>
<span class="t" id="t79" style="left:39.6px;top:487.9px;font-size:11px;color:#b6b6b6;transform:scaleX(0.9306);">8</span>
<span class="t" id="t80" style="left:39.6px;top:525.4px;font-size:11px;color:#b6b6b6;transform:scaleX(0.9306);">9</span>
<span class="t" id="t81" style="left:39.6px;top:562.9px;font-size:11px;color:#b6b6b6;transform:scaleX(0.9306);">1</span>
<span class="t" id="t82" style="left:39.6px;top:575.2px;font-size:11px;color:#b6b6b6;transform:scaleX(0.9306);">0</span>
<span class="t" id="t83" style="left:39.6px;top:600.4px;font-size:11px;color:#b6b6b6;transform:scaleX(0.9306);">1</span>
<span class="t" id="t84" style="left:39.6px;top:612.7px;font-size:11px;color:#b6b6b6;transform:scaleX(0.9306);">1</span>
<span class="t" id="t85" style="left:39.6px;top:637.9px;font-size:11px;color:#b6b6b6;transform:scaleX(0.9306);">1</span>
<span class="t" id="t86" style="left:39.6px;top:650.2px;font-size:11px;color:#b6b6b6;transform:scaleX(0.9306);">2</span>
<span class="t" id="t87" style="left:39.6px;top:675.3px;font-size:11px;color:#b6b6b6;transform:scaleX(0.9306);">1</span>
<span class="t" id="t88" style="left:39.6px;top:687.6px;font-size:11px;color:#b6b6b6;transform:scaleX(0.9306);">3</span>
<span class="t" id="t89" style="left:39.6px;top:712.8px;font-size:11px;color:#b6b6b6;transform:scaleX(0.9306);">1</span>
<span class="t" id="t90" style="left:39.6px;top:725.1px;font-size:11px;color:#b6b6b6;transform:scaleX(0.9306);">4</span>
<span class="t" id="t91" style="left:39.6px;top:750.3px;font-size:11px;color:#b6b6b6;transform:scaleX(0.9306);">1</span>
<span class="t" id="t92" style="left:39.6px;top:762.6px;font-size:11px;color:#b6b6b6;transform:scaleX(0.9306);">5</span>
<span class="t" id="t93" style="left:39.6px;top:787.8px;font-size:11px;color:#b6b6b6;transform:scaleX(0.9306);">1</span>
<span class="t" id="t94" style="left:39.6px;top:800.1px;font-size:11px;color:#b6b6b6;transform:scaleX(0.9306);">6</span>
</div>
<div id="edge"></div>
</div>
</body>
</html>
